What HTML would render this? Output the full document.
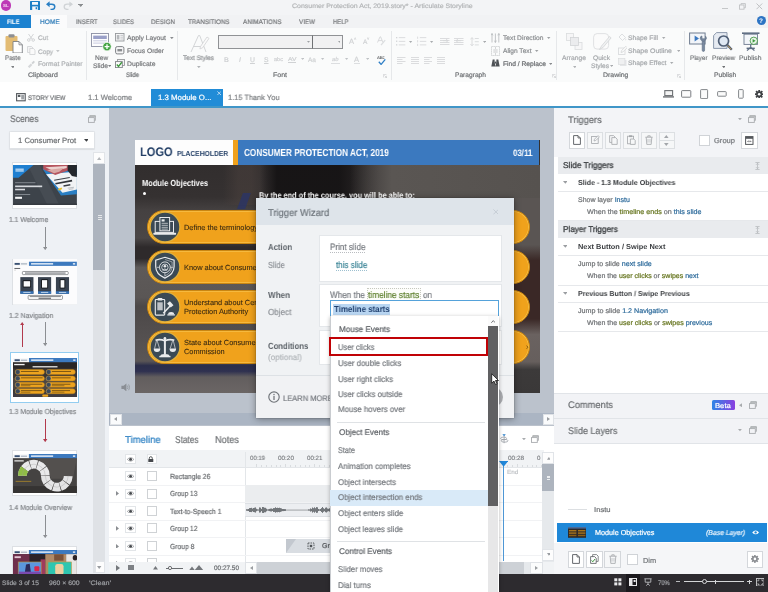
<!DOCTYPE html>
<html><head><meta charset="utf-8"><title>Consumer Protection Act, 2019.story - Articulate Storyline</title>
<style>
html,body{margin:0;padding:0;}
body{width:768px;height:592px;overflow:hidden;position:relative;background:#fff;font-family:"Liberation Sans",Arial,sans-serif;}
.a{position:absolute;box-sizing:border-box;display:block;}
.t{text-rendering:geometricPrecision;will-change:transform;position:absolute;white-space:nowrap;transform-origin:0 50%;display:block;}
</style></head><body>
<div class="a" style="left:0px;top:0px;width:768px;height:15px;background:#f3f4f6;"></div>
<div class="a" style="left:0.5px;top:0px;width:10.5px;height:10.5px;background:#bd3bb6;border-radius:50%;"></div>
<span class="t" style="left:2.9px;top:4px;font-size:4.4px;line-height:4.4px;color:#f6d8f2;font-weight:bold;">SL</span>
<svg class="a" style="left:30px;top:1px;" width="10" height="9" viewBox="0 0 10 9"><rect x="0" y="0" width="10" height="9" rx="0.6" fill="#1d7fc6"/><rect x="2" y="1" width="6" height="2.8" fill="#f3f6fa"/><rect x="2.2" y="5.4" width="5.6" height="3.6" fill="#f3f6fa"/><rect x="5.6" y="6.2" width="1.4" height="2" fill="#1d7fc6"/></svg>
<svg class="a" style="left:46px;top:1px;" width="10" height="9" viewBox="0 0 10 9"><path d="M1.2,3.2h4.6a3,2.6 0 0 1 0,5.2h-1.3" fill="none" stroke="#2a7fc4" stroke-width="1.5"/><polygon points="0,3.2 3.6,0.2 3.6,6.2" fill="#2a7fc4"/></svg>
<svg class="a" style="left:63px;top:1px;" width="10" height="9" viewBox="0 0 10 9"><path d="M8.8,3.2h-4.6a3,2.6 0 0 0 0,5.2h1.3" fill="none" stroke="#d0d3d6" stroke-width="1.3"/><polygon points="10,3.2 6.4,0.4 6.4,6" fill="#d0d3d6"/></svg>
<div class="a" style="left:78px;top:3.6px;width:5px;height:0.9px;background:#8a8d90;"></div>
<svg class="a" style="left:78.775px;top:5.3875px;" width="3.45" height="2.025" viewBox="0 0 3.45 2.025"><polygon points="0,0 3.45,0 1.72,2.03" fill="#8a8d90"/></svg>
<span class="t" style="left:291.5px;top:4px;font-size:6.4px;line-height:6.4px;color:#b4b6b8;-webkit-text-stroke:0.2px;transform:scaleX(1.094);">Consumer Protection Act, 2019.story* - Articulate Storyline</span>
<div class="a" style="left:721.5px;top:8px;width:6px;height:0.9px;background:#c5c7c9;"></div>
<svg class="a" style="left:738.5px;top:2.5px;" width="7" height="7" viewBox="0 0 7 7"><rect x="0.5" y="2" width="4.5" height="4.2" fill="none" stroke="#c0c2c4" stroke-width="0.9"/><path d="M2,2V0.6h4.4v4.2H5" fill="none" stroke="#c0c2c4" stroke-width="0.9"/></svg>
<svg class="a" style="left:756px;top:2.5px;" width="7" height="7" viewBox="0 0 7 7"><path d="M0.5,0.5L6.2,6.2M6.2,0.5L0.5,6.2" stroke="#c0c2c4" stroke-width="1"/></svg>
<div class="a" style="left:0px;top:15px;width:768px;height:13px;background:#f1f2f4;"></div>
<div class="a" style="left:0px;top:15px;width:31px;height:13px;background:#1c82d0;"></div>
<span class="t" style="left:7px;top:20px;font-size:6.6px;line-height:6.6px;color:#ffffff;font-weight:bold;transform:scaleX(0.874);">FILE</span>
<div class="a" style="left:31px;top:15px;width:35.5px;height:13px;background:#fbfbfc;"></div>
<span class="t" style="left:39.5px;top:20px;font-size:6.6px;line-height:6.6px;color:#2f7cb8;-webkit-text-stroke:0.2px;transform:scaleX(0.985);">HOME</span>
<span class="t" style="left:75.5px;top:20px;font-size:6.6px;line-height:6.6px;color:#77797c;-webkit-text-stroke:0.2px;transform:scaleX(0.893);">INSERT</span>
<span class="t" style="left:112.5px;top:20px;font-size:6.6px;line-height:6.6px;color:#77797c;-webkit-text-stroke:0.2px;transform:scaleX(0.894);">SLIDES</span>
<span class="t" style="left:150.5px;top:20px;font-size:6.6px;line-height:6.6px;color:#77797c;-webkit-text-stroke:0.2px;transform:scaleX(0.948);">DESIGN</span>
<span class="t" style="left:188px;top:20px;font-size:6.6px;line-height:6.6px;color:#77797c;-webkit-text-stroke:0.2px;transform:scaleX(0.935);">TRANSITIONS</span>
<span class="t" style="left:243px;top:20px;font-size:6.6px;line-height:6.6px;color:#77797c;-webkit-text-stroke:0.2px;transform:scaleX(0.949);">ANIMATIONS</span>
<span class="t" style="left:298.5px;top:20px;font-size:6.6px;line-height:6.6px;color:#77797c;-webkit-text-stroke:0.2px;transform:scaleX(0.949);">VIEW</span>
<span class="t" style="left:333px;top:20px;font-size:6.6px;line-height:6.6px;color:#77797c;-webkit-text-stroke:0.2px;transform:scaleX(0.899);">HELP</span>
<div class="a" style="left:756.5px;top:16px;width:9px;height:9px;background:#2d74c4;border-radius:50%;"></div>
<span class="t" style="left:759.3px;top:19px;font-size:6.5px;line-height:6.5px;color:#ffffff;font-weight:bold;">?</span>
<div class="a" style="left:0px;top:28px;width:768px;height:54px;background:#fafbfb;"></div>
<div class="a" style="left:0px;top:81.5px;width:768px;height:0.8px;background:#e4e6e8;"></div>
<div class="a" style="left:86px;top:31px;width:0.8px;height:49px;background:#e6e8ea;"></div>
<div class="a" style="left:176.5px;top:31px;width:0.8px;height:49px;background:#e6e8ea;"></div>
<div class="a" style="left:390.5px;top:31px;width:0.8px;height:49px;background:#e6e8ea;"></div>
<div class="a" style="left:556px;top:31px;width:0.8px;height:49px;background:#e6e8ea;"></div>
<div class="a" style="left:683.5px;top:31px;width:0.8px;height:49px;background:#e6e8ea;"></div>
<svg class="a" style="left:5px;top:33.5px;" width="18" height="19.5" viewBox="0 0 18 19.5"><rect x="0.5" y="2" width="12" height="15" rx="1" fill="#e3bc74"/><rect x="3.5" y="0.3" width="6" height="3.2" rx="1" fill="#8d8f92"/><path d="M8,7.5h6l3.3,3.3v8.2H8z" fill="#fff" stroke="#7d8084" stroke-width="0.9"/><path d="M14,7.5v3.3h3.3" fill="none" stroke="#7d8084" stroke-width="0.8"/></svg>
<span class="t" style="left:4.5px;top:56px;font-size:6.6px;line-height:6.6px;color:#77797c;-webkit-text-stroke:0.2px;transform:scaleX(0.918);">Paste</span>
<svg class="a" style="left:10.545px;top:65.6525px;" width="3.91" height="2.295" viewBox="0 0 3.91 2.295"><polygon points="0,0 3.91,0 1.95,2.29" fill="#7d8084"/></svg>
<svg class="a" style="left:27px;top:34px;" width="8" height="7.5" viewBox="0 0 8 7.5"><path d="M1.5,0L5.2,5.2M6.5,0L2.8,5.2" stroke="#c9ccce" stroke-width="0.8" fill="none"/><circle cx="1.8" cy="6" r="1.3" fill="none" stroke="#c9ccce" stroke-width="0.8"/><circle cx="6.2" cy="6" r="1.3" fill="none" stroke="#c9ccce" stroke-width="0.8"/></svg>
<span class="t" style="left:37.5px;top:36px;font-size:6.6px;line-height:6.6px;color:#adb0b3;-webkit-text-stroke:0.2px;transform:scaleX(0.974);">Cut</span>
<svg class="a" style="left:27px;top:46px;" width="8.5" height="9" viewBox="0 0 8.5 9"><path d="M0.5,0.5h4l1.5,1.5v4.5h-5.5z" fill="#f4f4f5" stroke="#cfd2d4" stroke-width="0.8"/><path d="M2.8,2.5h3.6l1.6,1.6v4.4h-5.2z" fill="#fafafa" stroke="#cfd2d4" stroke-width="0.8"/></svg>
<span class="t" style="left:37.5px;top:50px;font-size:6.6px;line-height:6.6px;color:#adb0b3;-webkit-text-stroke:0.2px;transform:scaleX(0.974);">Copy</span>
<svg class="a" style="left:56.16px;top:50.42px;" width="3.68" height="2.16" viewBox="0 0 3.68 2.16"><polygon points="0,0 3.68,0 1.84,2.16" fill="#c3c6c8"/></svg>
<svg class="a" style="left:27px;top:59.5px;" width="8.5" height="8.5" viewBox="0 0 8.5 8.5"><path d="M0.8,6.5l3-3 1.6,1.6-3,3z" fill="#d6d8da"/><path d="M4.4,2.9l2.2-2.2 1.4,1.4-2.2,2.2z" fill="#cfd2d4"/></svg>
<span class="t" style="left:37.5px;top:62px;font-size:6.6px;line-height:6.6px;color:#adb0b3;-webkit-text-stroke:0.2px;transform:scaleX(1.020);">Format Painter</span>
<span class="t" style="left:28px;top:73px;font-size:6.6px;line-height:6.6px;color:#6e7174;-webkit-text-stroke:0.2px;transform:scaleX(1.062);">Clipboard</span>
<svg class="a" style="left:91px;top:32.5px;" width="21" height="18.5" viewBox="0 0 21 18.5"><rect x="0.5" y="0.5" width="17" height="13" fill="#fdfdfe" stroke="#8b8fa3" stroke-width="0.9"/><rect x="2.2" y="2.6" width="13.6" height="3.4" fill="#9aa0c8"/><rect x="2.2" y="7.3" width="13.6" height="1" fill="#c8cbe0"/><rect x="2.2" y="9.6" width="13.6" height="1" fill="#c8cbe0"/><circle cx="16" cy="13.6" r="4.3" fill="#46a546" stroke="#fff" stroke-width="0.8"/><path d="M16,11.2v4.8M13.6,13.6h4.8" stroke="#fff" stroke-width="1.3"/></svg>
<span class="t" style="left:95px;top:56px;font-size:6.6px;line-height:6.6px;color:#77797c;-webkit-text-stroke:0.2px;transform:scaleX(0.985);">New</span>
<span class="t" style="left:92.5px;top:64px;font-size:6.6px;line-height:6.6px;color:#77797c;-webkit-text-stroke:0.2px;transform:scaleX(1.022);">Slide</span>
<svg class="a" style="left:107.775px;top:65.2875px;" width="3.45" height="2.025" viewBox="0 0 3.45 2.025"><polygon points="0,0 3.45,0 1.72,2.03" fill="#7d8084"/></svg>
<svg class="a" style="left:115px;top:33px;" width="9.5" height="8.5" viewBox="0 0 9.5 8.5"><rect x="0.5" y="0.5" width="8.5" height="7.5" fill="#f6f6f7" stroke="#96999c" stroke-width="0.9"/><rect x="1.8" y="2" width="2.6" height="4.5" fill="#b5b8bb"/><path d="M5.4,2.4h2.6M5.4,4.2h2.6M5.4,6h2.6" stroke="#b5b8bb" stroke-width="0.7"/></svg>
<span class="t" style="left:127px;top:36px;font-size:6.6px;line-height:6.6px;color:#77797c;-webkit-text-stroke:0.2px;transform:scaleX(1.022);">Apply Layout</span>
<svg class="a" style="left:170.16px;top:36.92px;" width="3.68" height="2.16" viewBox="0 0 3.68 2.16"><polygon points="0,0 3.68,0 1.84,2.16" fill="#8a8d90"/></svg>
<svg class="a" style="left:115px;top:46px;" width="9.5" height="8.5" viewBox="0 0 9.5 8.5"><rect x="0.6" y="0.6" width="8.3" height="7.3" rx="1.6" fill="#f6f6f7" stroke="#7f8286" stroke-width="1"/><rect x="2.4" y="3" width="4.7" height="2.4" fill="#8a8d90"/></svg>
<span class="t" style="left:127px;top:49px;font-size:6.6px;line-height:6.6px;color:#77797c;-webkit-text-stroke:0.2px;transform:scaleX(1.009);">Focus Order</span>
<svg class="a" style="left:115px;top:59px;" width="10" height="9" viewBox="0 0 10 9"><rect x="2.6" y="0.5" width="6.8" height="6" fill="#f4f4f5" stroke="#8a8d90" stroke-width="0.8"/><rect x="0.5" y="2.6" width="6.8" height="6" fill="#fdfdfd" stroke="#7f8286" stroke-width="0.9"/><path d="M1.8,5.6l1.7,1.8 3.3-4.2" stroke="#3f9a3f" stroke-width="1.4" fill="none"/></svg>
<span class="t" style="left:127px;top:62px;font-size:6.6px;line-height:6.6px;color:#77797c;-webkit-text-stroke:0.2px;transform:scaleX(1.036);">Duplicate</span>
<span class="t" style="left:126px;top:73px;font-size:6.6px;line-height:6.6px;color:#6e7174;-webkit-text-stroke:0.2px;transform:scaleX(0.886);">Slide</span>
<svg class="a" style="left:189px;top:33.5px;" width="21" height="19.5" viewBox="0 0 21 19.5"><path d="M2,18L9.5,1.5h1.2L17,18M5,12.5h9.5" stroke="#d3d5d7" stroke-width="1" fill="none"/><path d="M11.5,12.5l6.5-9.5 2,1.4-6.5,9.5-2.6,1z" fill="#fafafa" stroke="#d0d2d4" stroke-width="0.8"/></svg>
<span class="t" style="left:183px;top:56px;font-size:6.6px;line-height:6.6px;color:#8f9295;-webkit-text-stroke:0.2px;transform:scaleX(0.971);">Text Styles</span>
<svg class="a" style="left:197.16px;top:65.72px;" width="3.68" height="2.16" viewBox="0 0 3.68 2.16"><polygon points="0,0 3.68,0 1.84,2.16" fill="#b0b3b6"/></svg>
<div class="a" style="left:218px;top:34.5px;width:94.5px;height:14px;background:#f1f1f2;border:1px solid #909295;"></div>
<div class="a" style="left:311.5px;top:34.5px;width:31.5px;height:14px;background:#f1f1f2;border:1px solid #909295;border-left:1.6px solid #6f7174;"></div>
<svg class="a" style="left:307.205px;top:40.8225px;" width="2.99" height="1.755" viewBox="0 0 2.99 1.755"><polygon points="0,0 2.99,0 1.49,1.76" fill="#9da0a3"/></svg>
<svg class="a" style="left:337.505px;top:40.8225px;" width="2.99" height="1.755" viewBox="0 0 2.99 1.755"><polygon points="0,0 2.99,0 1.49,1.76" fill="#9da0a3"/></svg>
<span class="t" style="left:348.5px;top:38px;font-size:7.5px;line-height:7.5px;color:#d0d2d4;-webkit-text-stroke:0.2px;">A</span>
<span class="t" style="left:362.5px;top:40px;font-size:6.5px;line-height:6.5px;color:#d0d2d4;-webkit-text-stroke:0.2px;">A</span>
<span class="t" style="left:354px;top:37px;font-size:4px;line-height:4px;color:#d0d2d4;-webkit-text-stroke:0.2px;">˄</span>
<span class="t" style="left:367px;top:37px;font-size:4px;line-height:4px;color:#d0d2d4;-webkit-text-stroke:0.2px;">˅</span>
<svg class="a" style="left:377px;top:36px;" width="9" height="9.5" viewBox="0 0 9 9.5"><path d="M0.5,6.5L3,0.8h0.6L6,6.5M1.4,4.6h3.6" stroke="#d0d2d4" stroke-width="0.8" fill="none"/><path d="M3.5,8.8l4.2-5 1,0.8-4.2,5z" fill="#dcdee0"/></svg>
<span class="t" style="left:223.5px;top:58px;font-size:6.8px;line-height:6.8px;color:#d0d2d4;font-weight:bold;">B</span>
<span class="t" style="left:238.5px;top:58px;font-size:6.8px;line-height:6.8px;color:#d0d2d4;-webkit-text-stroke:0.2px;font-style:italic;">I</span>
<span class="t" style="left:250px;top:58px;font-size:6.8px;line-height:6.8px;color:#d0d2d4;-webkit-text-stroke:0.2px;text-decoration:underline;">U</span>
<span class="t" style="left:263.5px;top:58px;font-size:6.8px;line-height:6.8px;color:#d0d2d4;-webkit-text-stroke:0.2px;text-decoration:underline;">S</span>
<span class="t" style="left:274px;top:58px;font-size:5.4px;line-height:5.4px;color:#d0d2d4;-webkit-text-stroke:0.2px;transform:scaleX(1.034);">abc</span>
<span class="t" style="left:287.5px;top:58px;font-size:5.6px;line-height:5.6px;color:#d0d2d4;-webkit-text-stroke:0.2px;transform:scaleX(1.205);">AV</span>
<div class="a" style="left:288px;top:62.4px;width:7.5px;height:0.7px;background:#d0d2d4;"></div>
<svg class="a" style="left:300.89px;top:58.355px;" width="3.22" height="1.89" viewBox="0 0 3.22 1.89"><polygon points="0,0 3.22,0 1.61,1.89" fill="#c0c3c6"/></svg>
<span class="t" style="left:308px;top:58px;font-size:6.4px;line-height:6.4px;color:#d0d2d4;-webkit-text-stroke:0.2px;transform:scaleX(1.022);">Aa</span>
<svg class="a" style="left:321.39px;top:58.355px;" width="3.22" height="1.89" viewBox="0 0 3.22 1.89"><polygon points="0,0 3.22,0 1.61,1.89" fill="#c0c3c6"/></svg>
<span class="t" style="left:331.5px;top:58px;font-size:5.6px;line-height:5.6px;color:#d0d2d4;-webkit-text-stroke:0.2px;font-style:italic;transform:scaleX(1.044);">ab</span>
<div class="a" style="left:331px;top:62.6px;width:9px;height:1px;background:#dcdee0;"></div>
<svg class="a" style="left:345.39px;top:58.355px;" width="3.22" height="1.89" viewBox="0 0 3.22 1.89"><polygon points="0,0 3.22,0 1.61,1.89" fill="#c0c3c6"/></svg>
<span class="t" style="left:354.2px;top:56px;font-size:7.6px;line-height:7.6px;color:#d0d2d4;-webkit-text-stroke:0.2px;">A</span>
<div class="a" style="left:354px;top:62.6px;width:6px;height:1px;background:#dcdee0;"></div>
<svg class="a" style="left:365.99px;top:58.355px;" width="3.22" height="1.89" viewBox="0 0 3.22 1.89"><polygon points="0,0 3.22,0 1.61,1.89" fill="#c0c3c6"/></svg>
<span class="t" style="left:377.2px;top:56px;font-size:3.9px;line-height:3.9px;color:#55585c;font-weight:bold;transform:scaleX(0.923);">ABC</span>
<svg class="a" style="left:377.5px;top:58.5px;" width="8" height="6.5" viewBox="0 0 8 6.5"><path d="M0.8,2.8l2.3,2.6 4.2-5" stroke="#2f7fc6" stroke-width="1.3" fill="none"/></svg>
<span class="t" style="left:273px;top:73px;font-size:6.6px;line-height:6.6px;color:#6e7174;-webkit-text-stroke:0.2px;transform:scaleX(1.060);">Font</span>
<svg class="a" style="left:383px;top:73.5px;" width="4" height="4" viewBox="0 0 4 4"><path d="M0.4,0.4h3M0.4,0.4v3M1.4,1.4l2.2,2.2M3.6,1.8v1.8h-1.8" stroke="#c2c5c8" stroke-width="0.6" fill="none"/></svg>
<svg class="a" style="left:396px;top:36px;" width="9.5" height="10" viewBox="0 0 9.5 10"><rect x="0" y="1.0" width="1.3" height="1.3" fill="#d3d5d7"/><rect x="2.8" y="1.3" width="6.5" height="0.8" fill="#d3d5d7"/><rect x="0" y="4.6" width="1.3" height="1.3" fill="#d3d5d7"/><rect x="2.8" y="4.9" width="6.5" height="0.8" fill="#d3d5d7"/><rect x="0" y="8.2" width="1.3" height="1.3" fill="#d3d5d7"/><rect x="2.8" y="8.5" width="6.5" height="0.8" fill="#d3d5d7"/></svg>
<svg class="a" style="left:409.39px;top:40.755px;" width="3.22" height="1.89" viewBox="0 0 3.22 1.89"><polygon points="0,0 3.22,0 1.61,1.89" fill="#a9acaf"/></svg>
<svg class="a" style="left:417px;top:36px;" width="9.5" height="10" viewBox="0 0 9.5 10"><rect x="0.3" y="0.6" width="0.8" height="2.2" fill="#d3d5d7"/><rect x="2.8" y="1.3" width="6.5" height="0.8" fill="#d3d5d7"/><rect x="0.3" y="4.2" width="0.8" height="2.2" fill="#d3d5d7"/><rect x="2.8" y="4.9" width="6.5" height="0.8" fill="#d3d5d7"/><rect x="0.3" y="7.8" width="0.8" height="2.2" fill="#d3d5d7"/><rect x="2.8" y="8.5" width="6.5" height="0.8" fill="#d3d5d7"/></svg>
<svg class="a" style="left:430.39px;top:40.755px;" width="3.22" height="1.89" viewBox="0 0 3.22 1.89"><polygon points="0,0 3.22,0 1.61,1.89" fill="#a9acaf"/></svg>
<svg class="a" style="left:440px;top:37.5px;" width="9.5" height="7" viewBox="0 0 9.5 7"><rect x="0" y="0.10" width="9.5" height="0.8" fill="#d3d5d7"/><rect x="0" y="2.10" width="9.5" height="0.8" fill="#d3d5d7"/><rect x="0" y="4.10" width="9.5" height="0.8" fill="#d3d5d7"/><rect x="0" y="6.10" width="9.5" height="0.8" fill="#d3d5d7"/></svg>
<svg class="a" style="left:443px;top:39.3px;" width="6" height="3.5" viewBox="0 0 6 3.5"><path d="M0,1.7h4.5M3,0l2,1.7-2,1.7" stroke="#d3d5d7" stroke-width="0.8" fill="none"/></svg>
<svg class="a" style="left:454px;top:37.5px;" width="9.5" height="7" viewBox="0 0 9.5 7"><rect x="0" y="0.10" width="9.5" height="0.8" fill="#d3d5d7"/><rect x="0" y="2.10" width="9.5" height="0.8" fill="#d3d5d7"/><rect x="0" y="4.10" width="9.5" height="0.8" fill="#d3d5d7"/><rect x="0" y="6.10" width="9.5" height="0.8" fill="#d3d5d7"/></svg>
<svg class="a" style="left:455px;top:39.3px;" width="6" height="3.5" viewBox="0 0 6 3.5"><path d="M6,1.7h-4.5M3,0l-2,1.7 2,1.7" stroke="#d3d5d7" stroke-width="0.8" fill="none"/></svg>
<svg class="a" style="left:470px;top:36.5px;" width="9" height="9.5" viewBox="0 0 9 9.5"><path d="M2,0.8v7.8M0.4,2.4l1.6-1.8 1.6,1.8M0.4,7l1.6,1.8 1.6-1.8" stroke="#d3d5d7" stroke-width="0.8" fill="none"/><path d="M4.8,1.5h4M4.8,4.7h4M4.8,7.9h4" stroke="#d3d5d7" stroke-width="0.8"/></svg>
<svg class="a" style="left:482.89px;top:40.755px;" width="3.22" height="1.89" viewBox="0 0 3.22 1.89"><polygon points="0,0 3.22,0 1.61,1.89" fill="#a9acaf"/></svg>
<svg class="a" style="left:397px;top:56.5px;" width="8.5" height="7" viewBox="0 0 8.5 7"><rect x="0" y="0.10" width="8.5" height="0.8" fill="#d3d5d7"/><rect x="0" y="2.10" width="5.525" height="0.8" fill="#d3d5d7"/><rect x="0" y="4.10" width="8.5" height="0.8" fill="#d3d5d7"/><rect x="0" y="6.10" width="5.525" height="0.8" fill="#d3d5d7"/></svg>
<svg class="a" style="left:410.5px;top:56.5px;" width="8.5" height="7" viewBox="0 0 8.5 7"><rect x="0" y="0.10" width="8.5" height="0.8" fill="#d3d5d7"/><rect x="0" y="2.10" width="8.5" height="0.8" fill="#d3d5d7"/><rect x="0" y="4.10" width="8.5" height="0.8" fill="#d3d5d7"/><rect x="0" y="6.10" width="8.5" height="0.8" fill="#d3d5d7"/></svg>
<svg class="a" style="left:423.5px;top:56.5px;" width="8.5" height="7" viewBox="0 0 8.5 7"><rect x="0" y="0.10" width="8.5" height="0.8" fill="#d3d5d7"/><rect x="0" y="2.10" width="5.525" height="0.8" fill="#d3d5d7"/><rect x="0" y="4.10" width="8.5" height="0.8" fill="#d3d5d7"/><rect x="0" y="6.10" width="5.525" height="0.8" fill="#d3d5d7"/></svg>
<svg class="a" style="left:436.5px;top:56.5px;" width="8.5" height="7" viewBox="0 0 8.5 7"><rect x="0" y="0.10" width="8.5" height="0.8" fill="#d3d5d7"/><rect x="0" y="2.10" width="8.5" height="0.8" fill="#d3d5d7"/><rect x="0" y="4.10" width="8.5" height="0.8" fill="#d3d5d7"/><rect x="0" y="6.10" width="8.5" height="0.8" fill="#d3d5d7"/></svg>
<svg class="a" style="left:491px;top:32.5px;" width="9" height="10" viewBox="0 0 9 10"><path d="M1,0.5v9M4.4,0.5v9M7.8,0.5v9" stroke="#b4b7ba" stroke-width="0.8"/><path d="M0,2.4l1-1.9 1,1.9M3.4,7.6l1,1.9 1-1.9M6.8,2.4l1-1.9 1,1.9" stroke="#b4b7ba" stroke-width="0.7" fill="none"/></svg>
<span class="t" style="left:502.5px;top:36px;font-size:6.6px;line-height:6.6px;color:#8a8d90;-webkit-text-stroke:0.2px;transform:scaleX(1.013);">Text Direction</span>
<svg class="a" style="left:547.275px;top:36.9875px;" width="3.45" height="2.025" viewBox="0 0 3.45 2.025"><polygon points="0,0 3.45,0 1.72,2.03" fill="#9da0a3"/></svg>
<svg class="a" style="left:491px;top:45.5px;" width="9" height="10" viewBox="0 0 9 10"><rect x="0.5" y="0.5" width="8" height="9" fill="none" stroke="#b4b7ba" stroke-width="0.7" stroke-dasharray="1.2,0.8"/><path d="M2.3,4h4.4M2.3,6h4.4M4.5,1.2v1.6M4.5,7.2v1.6" stroke="#b4b7ba" stroke-width="0.7"/></svg>
<span class="t" style="left:502.5px;top:49px;font-size:6.6px;line-height:6.6px;color:#8a8d90;-webkit-text-stroke:0.2px;transform:scaleX(1.000);">Align Text</span>
<svg class="a" style="left:535.275px;top:50.4875px;" width="3.45" height="2.025" viewBox="0 0 3.45 2.025"><polygon points="0,0 3.45,0 1.72,2.03" fill="#9da0a3"/></svg>
<svg class="a" style="left:491px;top:59.3px;" width="9" height="8.5" viewBox="0 0 9 8.5"><path d="M1.7,0.5h1.9v2.5l0.9,4.5h-4.2l0.9-4.5zM5.4,0.5h1.9l0.5,2.5 0.9,4.5h-4.2l0.9-4.5z" fill="#4e5256"/><rect x="3.6" y="2.6" width="1.8" height="2" fill="#4e5256"/></svg>
<span class="t" style="left:502.5px;top:62px;font-size:6.6px;line-height:6.6px;color:#66696c;-webkit-text-stroke:0.2px;transform:scaleX(1.010);">Find / Replace</span>
<svg class="a" style="left:548.775px;top:63.4875px;" width="3.45" height="2.025" viewBox="0 0 3.45 2.025"><polygon points="0,0 3.45,0 1.72,2.03" fill="#8a8d90"/></svg>
<span class="t" style="left:454.5px;top:73px;font-size:6.6px;line-height:6.6px;color:#6e7174;-webkit-text-stroke:0.2px;transform:scaleX(1.006);">Paragraph</span>
<svg class="a" style="left:551.5px;top:73.5px;" width="4" height="4" viewBox="0 0 4 4"><path d="M0.4,0.4h3M0.4,0.4v3M1.4,1.4l2.2,2.2M3.6,1.8v1.8h-1.8" stroke="#c2c5c8" stroke-width="0.6" fill="none"/></svg>
<svg class="a" style="left:565.5px;top:33px;" width="17" height="17.5" viewBox="0 0 17 17.5"><rect x="0.5" y="0.5" width="7" height="7" fill="#f6f6f7" stroke="#dadcde" stroke-width="0.8"/><rect x="9" y="9.5" width="7" height="7" fill="#f6f6f7" stroke="#dadcde" stroke-width="0.8"/><rect x="4.5" y="4.5" width="8" height="8" fill="#ebecee" stroke="#d2d4d6" stroke-width="0.8"/></svg>
<span class="t" style="left:562.4px;top:56px;font-size:6.6px;line-height:6.6px;color:#a6a9ac;-webkit-text-stroke:0.2px;transform:scaleX(1.018);">Arrange</span>
<svg class="a" style="left:572.66px;top:65.72px;" width="3.68" height="2.16" viewBox="0 0 3.68 2.16"><polygon points="0,0 3.68,0 1.84,2.16" fill="#b0b3b6"/></svg>
<svg class="a" style="left:593px;top:33px;" width="19" height="19.5" viewBox="0 0 19 19.5"><rect x="0.6" y="0.6" width="15" height="15.5" rx="3.5" fill="#fbfbfb" stroke="#dcdee0" stroke-width="0.9"/><path d="M6.5,16.5l2-3.5 8-9.5 1.6,1.4-8,9.5z" fill="#f0f1f2" stroke="#cfd1d3" stroke-width="0.7"/></svg>
<span class="t" style="left:593px;top:56px;font-size:6.6px;line-height:6.6px;color:#a6a9ac;-webkit-text-stroke:0.2px;transform:scaleX(1.008);">Quick</span>
<span class="t" style="left:591px;top:64px;font-size:6.6px;line-height:6.6px;color:#a6a9ac;-webkit-text-stroke:0.2px;transform:scaleX(1.002);">Styles</span>
<svg class="a" style="left:609.69px;top:65.455px;" width="3.22" height="1.89" viewBox="0 0 3.22 1.89"><polygon points="0,0 3.22,0 1.61,1.89" fill="#a9acaf"/></svg>
<svg class="a" style="left:617.5px;top:33px;" width="9" height="8.5" viewBox="0 0 9 8.5"><path d="M1,4l3-3 3.5,3.5-3,3z" fill="none" stroke="#d6d8da" stroke-width="0.8"/><path d="M7.8,5.2q1,1.6 0,2.4q-1-0.8 0-2.4" fill="#d6d8da"/></svg>
<span class="t" style="left:628px;top:36px;font-size:6.6px;line-height:6.6px;color:#a6a9ac;-webkit-text-stroke:0.2px;transform:scaleX(1.022);">Shape Fill</span>
<svg class="a" style="left:662.275px;top:37.3875px;" width="3.45" height="2.025" viewBox="0 0 3.45 2.025"><polygon points="0,0 3.45,0 1.72,2.03" fill="#a9acaf"/></svg>
<svg class="a" style="left:617.5px;top:45.5px;" width="9.5" height="9" viewBox="0 0 9.5 9"><rect x="0.5" y="2" width="6.5" height="6.5" fill="none" stroke="#d6d8da" stroke-width="0.8"/><path d="M3,6.5l0.6-2 4.2-4.2 1.4,1.4-4.2,4.2z" fill="#fafafa" stroke="#d0d2d4" stroke-width="0.7"/></svg>
<span class="t" style="left:628px;top:49px;font-size:6.6px;line-height:6.6px;color:#a6a9ac;-webkit-text-stroke:0.2px;transform:scaleX(1.052);">Shape Outline</span>
<svg class="a" style="left:676.875px;top:49.9875px;" width="3.45" height="2.025" viewBox="0 0 3.45 2.025"><polygon points="0,0 3.45,0 1.72,2.03" fill="#a9acaf"/></svg>
<svg class="a" style="left:617.5px;top:58px;" width="9" height="8.5" viewBox="0 0 9 8.5"><rect x="2" y="2" width="6.5" height="6" fill="#e4e6e8"/><rect x="0.4" y="0.4" width="6.5" height="6" fill="#eff0f1" stroke="#dadcde" stroke-width="0.7"/></svg>
<span class="t" style="left:628px;top:61px;font-size:6.6px;line-height:6.6px;color:#a6a9ac;-webkit-text-stroke:0.2px;transform:scaleX(1.022);">Shape Effect</span>
<svg class="a" style="left:670.275px;top:62.1875px;" width="3.45" height="2.025" viewBox="0 0 3.45 2.025"><polygon points="0,0 3.45,0 1.72,2.03" fill="#a9acaf"/></svg>
<span class="t" style="left:603px;top:73px;font-size:6.6px;line-height:6.6px;color:#6e7174;-webkit-text-stroke:0.2px;transform:scaleX(1.053);">Drawing</span>
<svg class="a" style="left:677px;top:73.5px;" width="4" height="4" viewBox="0 0 4 4"><path d="M0.4,0.4h3M0.4,0.4v3M1.4,1.4l2.2,2.2M3.6,1.8v1.8h-1.8" stroke="#c2c5c8" stroke-width="0.6" fill="none"/></svg>
<svg class="a" style="left:689px;top:32px;" width="19" height="20" viewBox="0 0 19 20"><rect x="0.6" y="1" width="15.5" height="11" fill="#f2f5f9" stroke="#6f7c90" stroke-width="1"/><polygon points="5.6,3.6 5.6,9.4 10,6.5" fill="#3b78c0"/><path d="M12,4.2a3,3 0 1 0 4.6,0v2.6h-1v0h-2.6v-2.6zM13.2,9v9.2a1.2,1.2 0 0 0 2.4,0V9" fill="#7a8aa0" stroke="#5d6c82" stroke-width="0.6"/></svg>
<span class="t" style="left:690px;top:56px;font-size:6.6px;line-height:6.6px;color:#66696c;transform:scaleX(0.935);-webkit-text-stroke:0.1px;">Player</span>
<svg class="a" style="left:713px;top:32px;" width="20" height="20" viewBox="0 0 20 20"><path d="M0.6,3.5L3.6,0.6H14v15.8H0.6z" fill="#e6ebf2" stroke="#7f8da3" stroke-width="0.9"/><circle cx="10.6" cy="9" r="5" fill="#dfe8f3" stroke="#4f5e75" stroke-width="1.7"/><path d="M14.2,12.8l4.6,5" stroke="#4f5e75" stroke-width="2.3"/><path d="M14.6,13.4l3.8,4" stroke="#c89a4a" stroke-width="0.9"/></svg>
<span class="t" style="left:712px;top:56px;font-size:6.6px;line-height:6.6px;color:#66696c;transform:scaleX(0.980);-webkit-text-stroke:0.1px;">Preview</span>
<svg class="a" style="left:721.76px;top:65.72px;" width="3.68" height="2.16" viewBox="0 0 3.68 2.16"><polygon points="0,0 3.68,0 1.84,2.16" fill="#6e7174"/></svg>
<svg class="a" style="left:742px;top:32px;" width="18" height="20" viewBox="0 0 18 20"><path d="M0,1.2h17.5" stroke="#5d6c82" stroke-width="1.6"/><rect x="2" y="2.2" width="13.5" height="10.2" fill="#f3f6fa" stroke="#6f7c90" stroke-width="0.9"/><circle cx="11.8" cy="8.8" r="3.7" fill="#e8f4e8" stroke="#4a9a4a" stroke-width="0.9"/><polygon points="10.6,6.9 10.6,10.7 13.6,8.8" fill="#3f9a3f"/><path d="M8.7,12.5v3M5,18.6l3.7-3.2 3.7,3.2" stroke="#5d6c82" stroke-width="1.2" fill="none"/><rect x="4.6" y="15.6" width="8.2" height="1.5" fill="#5d6c82"/></svg>
<span class="t" style="left:739px;top:56px;font-size:6.6px;line-height:6.6px;color:#66696c;transform:scaleX(1.039);-webkit-text-stroke:0.1px;">Publish</span>
<span class="t" style="left:713.7px;top:73px;font-size:6.6px;line-height:6.6px;color:#6e7174;-webkit-text-stroke:0.2px;transform:scaleX(1.030);">Publish</span>
<div class="a" style="left:0px;top:82.3px;width:768px;height:24.5px;background:#ffffff;"></div>
<svg class="a" style="left:15.5px;top:93px;" width="10" height="8.5" viewBox="0 0 10 8.5"><rect x="0.6" y="0.6" width="8.6" height="7.2" fill="#fff" stroke="#55595e" stroke-width="1.1"/><rect x="1.8" y="1.8" width="2.6" height="2.2" fill="#55595e"/><rect x="5.2" y="1.8" width="2.8" height="4.6" fill="#9ea2a6"/></svg>
<span class="t" style="left:28px;top:96px;font-size:6.5px;line-height:6.5px;color:#6a6d70;-webkit-text-stroke:0.2px;transform:scaleX(0.927);">STORY VIEW</span>
<span class="t" style="left:88px;top:94px;font-size:7.6px;line-height:7.6px;color:#7c7f82;-webkit-text-stroke:0.2px;transform:scaleX(0.995);">1.1 Welcome</span>
<div class="a" style="left:151px;top:88.5px;width:72px;height:18.5px;background:#218cd7;"></div>
<span class="t" style="left:157.5px;top:94px;font-size:7.6px;line-height:7.6px;color:#ffffff;-webkit-text-stroke:0.2px;transform:scaleX(1.030);">1.3 Module O...</span>
<svg class="a" style="left:216.5px;top:90.5px;" width="4.5" height="4.5" viewBox="0 0 4.5 4.5"><path d="M0.4,0.4L4,4M4,0.4L0.4,4" stroke="#d6e9f8" stroke-width="0.8"/></svg>
<span class="t" style="left:227.5px;top:94px;font-size:7.6px;line-height:7.6px;color:#7c7f82;-webkit-text-stroke:0.2px;transform:scaleX(0.977);">1.15 Thank You</span>
<div class="a" style="left:0px;top:106.2px;width:768px;height:1.5px;background:#4096c8;"></div>
<svg class="a" style="left:662.5px;top:89.5px;" width="11.5" height="8" viewBox="0 0 11.5 8"><rect x="1.8" y="0.6" width="7.8" height="5" fill="#f4f4f4" stroke="#6e7174" stroke-width="1.1"/><rect x="0" y="6.2" width="11.5" height="1.4" fill="#6e7174"/></svg>
<svg class="a" style="left:681px;top:89.8px;" width="10.5" height="8" viewBox="0 0 10.5 8"><rect x="0.6" y="0.6" width="9.2" height="6.6" rx="0.6" fill="#fbfbfb" stroke="#7b7e82" stroke-width="1"/></svg>
<svg class="a" style="left:700px;top:88.8px;" width="8.5" height="10.5" viewBox="0 0 8.5 10.5"><rect x="0.6" y="0.6" width="7" height="9" rx="0.6" fill="#fbfbfb" stroke="#85888c" stroke-width="1"/></svg>
<svg class="a" style="left:717px;top:91px;" width="10" height="6" viewBox="0 0 10 6"><rect x="0.6" y="0.6" width="8.6" height="4.6" rx="0.6" fill="#fbfbfb" stroke="#85888c" stroke-width="1"/></svg>
<svg class="a" style="left:737.5px;top:88.8px;" width="6" height="10" viewBox="0 0 6 10"><rect x="0.6" y="0.6" width="4.6" height="8.6" rx="0.6" fill="#fbfbfb" stroke="#85888c" stroke-width="1"/></svg>
<svg class="a" style="left:754.5px;top:89.8px;" width="8.4" height="8.4" viewBox="0 0 8.4 8.4"><rect x="3.3" y="-0.2" width="1.8" height="8.8" fill="#3f4245" transform="rotate(0 4.2 4.2)"/><rect x="3.3" y="-0.2" width="1.8" height="8.8" fill="#3f4245" transform="rotate(45 4.2 4.2)"/><rect x="3.3" y="-0.2" width="1.8" height="8.8" fill="#3f4245" transform="rotate(90 4.2 4.2)"/><rect x="3.3" y="-0.2" width="1.8" height="8.8" fill="#3f4245" transform="rotate(135 4.2 4.2)"/><circle cx="4.2" cy="4.2" r="3" fill="#3f4245"/><circle cx="4.2" cy="4.2" r="1.3" fill="#fff"/></svg>
<div class="a" style="left:0px;top:108px;width:109px;height:466px;background:#eef1f5;"></div>
<span class="t" style="left:9.5px;top:115px;font-size:9.6px;line-height:9.6px;color:#6c6f72;-webkit-text-stroke:0.2px;transform:scaleX(0.890);">Scenes</span>
<svg class="a" style="left:88px;top:115px;" width="8" height="8" viewBox="0 0 8 8"><rect x="0.5" y="2.6" width="5.8" height="4.8" fill="none" stroke="#a8abae" stroke-width="0.9"/><path d="M1.8,2.4V0.8h5.6v4.6H6.4" fill="none" stroke="#a8abae" stroke-width="0.9"/><rect x="1.6" y="0.5" width="6" height="1.2" fill="#a8abae"/></svg>
<div class="a" style="left:9.3px;top:131px;width:85.7px;height:18px;background:#ffffff;border:1px solid #dfe2e6;border-radius:1.5px;box-shadow:0 0.5px 1px rgba(0,0,0,0.08);"></div>
<span class="t" style="left:17.7px;top:137px;font-size:7.6px;line-height:7.6px;color:#6c6f72;-webkit-text-stroke:0.2px;transform:scaleX(1.015);">1 Consumer Prot</span>
<svg class="a" style="left:83.585px;top:138.782px;" width="4.83" height="2.835" viewBox="0 0 4.83 2.835"><polygon points="0,0 4.83,0 2.42,2.84" fill="#3c3f42"/></svg>
<div class="a" style="left:93.2px;top:152.4px;width:12.2px;height:421px;background:#dfe2e6;"></div>
<div class="a" style="left:93.2px;top:152.4px;width:12.2px;height:11.8px;background:#fdfdfd;border:0.8px solid #e1e4e8;"></div>
<svg class="a" style="left:97.3px;top:156.6px;" width="4.4" height="3" viewBox="0 0 4.4 3"><polygon points="0,3 4.4,3 2.2,0" fill="#b4b7bb"/></svg>
<div class="a" style="left:93.2px;top:164.2px;width:12.2px;height:105.8px;background:#adb4be;"></div>
<div class="a" style="left:97.5px;top:215px;width:4px;height:0.8px;background:#e6e8ea;"></div>
<div class="a" style="left:97.5px;top:216.8px;width:4px;height:0.8px;background:#e6e8ea;"></div>
<div class="a" style="left:97.5px;top:218.6px;width:4px;height:0.8px;background:#e6e8ea;"></div>
<div class="a" style="left:94.5px;top:560.5px;width:10px;height:12.5px;background:#fdfdfd;border:1px solid #e1e4e8;"></div>
<svg class="a" style="left:97.3px;top:565.5px;" width="4.4" height="3" viewBox="0 0 4.4 3"><polygon points="0,0 4.4,0 2.2,3" fill="#9a9da1"/></svg>
<div class="a" style="left:12.1px;top:162.2px;width:65.1px;height:46.8px;background:#ffffff;border:0.8px solid #dde0e4;"></div>
<svg class="a" style="left:12.8px;top:165.3px;overflow:hidden;" width="63.9" height="40.1" viewBox="75 70 613 385"><rect x="75" y="70" width="613" height="385" fill="#3d434a"/>
<polygon points="215,70 330,70 520,455 405,455" fill="#464c53"/>
<polygon points="75,70 272,70 128,192 75,192" fill="#1f7fd0"/>
<rect x="98" y="105" width="80" height="10" fill="#e8f2fb"/><rect x="98" y="121" width="80" height="12" fill="#d2e6f8"/>
<polygon points="358,106 688,96 688,350 535,364" fill="#2a7fc4"/>
<polygon points="392,160 640,138 688,172 688,306 550,336" fill="#f1f3f5"/>
<polygon points="365,70 605,70 605,122 480,166 365,112" fill="#b5545e"/>
<polygon points="385,92 590,80 590,98 470,130" fill="#ecd3d0"/>
<polygon points="400,118 560,100 520,136 470,150" fill="#d8a7a4"/>
<polygon points="600,70 688,70 688,186 640,176 600,122" fill="#24272c"/>
<path d="M470,216L620,190" stroke="#3a3e45" stroke-width="11"/><path d="M482,250L642,220" stroke="#2f3339" stroke-width="17"/><path d="M560,272L625,260" stroke="#3a3e45" stroke-width="14"/>
<path d="M600,292L660,284M610,304L655,298" stroke="#8a8e94" stroke-width="5"/>
<polygon points="505,300 540,285 548,300 515,318" fill="#e6bf32"/>
<rect x="95" y="238" width="195" height="6" fill="#a9afb6"/>
<rect x="95" y="267" width="260" height="16" fill="#d6d9dd"/><rect x="95" y="298" width="95" height="15" fill="#d6d9dd"/>
<rect x="95" y="350" width="145" height="6" fill="#a9afb6"/><rect x="95" y="375" width="66" height="20" fill="#f4f5f6"/>
<rect x="75" y="440" width="613" height="15" fill="#353a40"/></svg>
<span class="t" style="left:9.3px;top:216px;font-size:7.3px;line-height:7.3px;color:#85888c;-webkit-text-stroke:0.2px;transform:scaleX(0.925);">1.1 Welcome</span>
<div class="a" style="left:44.8px;top:226.7px;width:0.9px;height:21.8px;background:#8c8f93;"></div>
<svg class="a" style="left:43px;top:247.3px;" width="4.4" height="3.2" viewBox="0 0 4.4 3.2"><polygon points="0,0 4.4,0 2.2,3.2" fill="#8c8f93"/></svg>
<div class="a" style="left:12.3px;top:258.5px;width:65.1px;height:46.6px;background:#ffffff;border:0.8px solid #dde0e4;"></div>
<svg class="a" style="left:12.8px;top:259px;overflow:hidden;" width="64.1" height="45.6" viewBox="75 66 615 438"><rect x="75" y="66" width="615" height="438" fill="#fcfcfd"/>
<rect x="75" y="92" width="153" height="40" fill="#f7f8f9"/><rect x="228" y="92" width="460" height="40" fill="#3c79be"/><rect x="90" y="104" width="50" height="18" fill="#3a5274"/><rect x="150" y="108" width="60" height="10" fill="#9aa6b6"/><rect x="248" y="105" width="212" height="15" fill="#dbe7f5"/><rect x="650" y="105" width="22" height="15" fill="#dbe7f5"/>
<rect x="88" y="152" width="56" height="9" fill="#55595e"/><rect x="88" y="170" width="12" height="4" fill="#777"/>
<rect x="165" y="186" width="440" height="30" rx="8" fill="#fff" stroke="#3e4247" stroke-width="5"/><rect x="190" y="196" width="390" height="10" fill="#6a6e74"/>
<rect x="145" y="240" width="126" height="160" fill="#3a4350"/><rect x="145" y="376" width="126" height="24" fill="#3572b8"/><rect x="173" y="382" width="70" height="9" fill="#c9dbf0"/><rect x="168.0" y="270.0" width="80" height="70" rx="10" fill="#14161a"/><rect x="177.0" y="279.0" width="62" height="52" fill="#fbfbfc"/><rect x="315" y="240" width="126" height="160" fill="#3a4350"/><rect x="315" y="376" width="126" height="24" fill="#3572b8"/><rect x="343" y="382" width="70" height="9" fill="#c9dbf0"/><rect x="344.0" y="260.0" width="68" height="90" rx="10" fill="#14161a"/><rect x="353.0" y="269.0" width="50" height="72" fill="#fbfbfc"/><rect x="487" y="240" width="126" height="160" fill="#3a4350"/><rect x="487" y="376" width="126" height="24" fill="#3572b8"/><rect x="515" y="382" width="70" height="9" fill="#c9dbf0"/><rect x="523.0" y="260.0" width="54" height="90" rx="10" fill="#14161a"/><rect x="532.0" y="269.0" width="36" height="72" fill="#fbfbfc"/>
<rect x="220" y="416" width="330" height="38" rx="8" fill="#fff" stroke="#3e4247" stroke-width="5"/><rect x="235" y="424" width="300" height="8" fill="#6a6e74"/><rect x="320" y="438" width="120" height="9" fill="#3e4247"/></svg>
<span class="t" style="left:9.3px;top:312px;font-size:7.3px;line-height:7.3px;color:#85888c;-webkit-text-stroke:0.2px;transform:scaleX(0.951);">1.2 Navigation</span>
<div class="a" style="left:21.6px;top:324.5px;width:0.9px;height:22px;background:#b23a4c;"></div>
<svg class="a" style="left:19.8px;top:321.6px;" width="4.4" height="3.2" viewBox="0 0 4.4 3.2"><polygon points="0,3.2 4.4,3.2 2.2,0" fill="#b23a4c"/></svg>
<div class="a" style="left:44.8px;top:322px;width:0.9px;height:22.6px;background:#8c8f93;"></div>
<svg class="a" style="left:43px;top:343.4px;" width="4.4" height="3.2" viewBox="0 0 4.4 3.2"><polygon points="0,0 4.4,0 2.2,3.2" fill="#8c8f93"/></svg>
<div class="a" style="left:10.2px;top:351.8px;width:69.1px;height:51.2px;background:#ffffff;border:1.3px solid #93cdf0;"></div>
<svg class="a" style="left:12.9px;top:357.5px;overflow:hidden;" width="64.2" height="39.8" viewBox="75 110 613 380"><rect x="75" y="105" width="613" height="385" fill="#3a3634"/>
<rect x="75" y="150" width="613" height="60" fill="#2a2726"/>
<rect x="75" y="300" width="613" height="110" fill="#4b4643"/><rect x="75" y="440" width="613" height="50" fill="#3e3c42"/>
<rect x="75" y="110" width="153" height="40" fill="#f7f8f9"/><rect x="228" y="110" width="460" height="40" fill="#3c79be"/><rect x="90" y="122" width="50" height="18" fill="#3a5274"/><rect x="150" y="126" width="60" height="10" fill="#9aa6b6"/><rect x="248" y="123" width="212" height="15" fill="#dbe7f5"/><rect x="650" y="123" width="22" height="15" fill="#dbe7f5"/>
<rect x="86" y="166" width="100" height="13" fill="#f2f2f2"/><rect x="262" y="188" width="238" height="12" fill="#eeeeee"/>
<rect x="95" y="220" width="280" height="48" rx="24" fill="#eda41f" stroke="#b9801a" stroke-width="4"/><circle cx="120" cy="244" r="22" fill="#39485a" stroke="#8a949e" stroke-width="3"/><rect x="151" y="234" width="170" height="9" fill="#7a5412"/><rect x="390" y="220" width="280" height="48" rx="24" fill="#eda41f" stroke="#b9801a" stroke-width="4"/><circle cx="415" cy="244" r="22" fill="#39485a" stroke="#8a949e" stroke-width="3"/><rect x="446" y="234" width="183" height="9" fill="#7a5412"/><rect x="95" y="281" width="280" height="48" rx="24" fill="#eda41f" stroke="#b9801a" stroke-width="4"/><circle cx="120" cy="305" r="22" fill="#39485a" stroke="#8a949e" stroke-width="3"/><rect x="151" y="295" width="207" height="9" fill="#7a5412"/><rect x="390" y="281" width="280" height="48" rx="24" fill="#eda41f" stroke="#b9801a" stroke-width="4"/><circle cx="415" cy="305" r="22" fill="#39485a" stroke="#8a949e" stroke-width="3"/><rect x="446" y="295" width="180" height="9" fill="#7a5412"/><rect x="95" y="342" width="280" height="48" rx="24" fill="#eda41f" stroke="#b9801a" stroke-width="4"/><circle cx="120" cy="366" r="22" fill="#39485a" stroke="#8a949e" stroke-width="3"/><rect x="151" y="356" width="204" height="9" fill="#7a5412"/><rect x="151" y="371" width="90" height="8" fill="#8a6218"/><rect x="390" y="342" width="280" height="48" rx="24" fill="#eda41f" stroke="#b9801a" stroke-width="4"/><circle cx="415" cy="366" r="22" fill="#39485a" stroke="#8a949e" stroke-width="3"/><rect x="446" y="356" width="177" height="9" fill="#7a5412"/><rect x="446" y="371" width="120" height="8" fill="#8a6218"/><rect x="95" y="403" width="280" height="48" rx="24" fill="#eda41f" stroke="#b9801a" stroke-width="4"/><circle cx="120" cy="427" r="22" fill="#39485a" stroke="#8a949e" stroke-width="3"/><rect x="151" y="417" width="201" height="9" fill="#7a5412"/><rect x="151" y="432" width="90" height="8" fill="#8a6218"/><rect x="390" y="403" width="280" height="48" rx="24" fill="#eda41f" stroke="#b9801a" stroke-width="4"/><circle cx="415" cy="427" r="22" fill="#39485a" stroke="#8a949e" stroke-width="3"/><rect x="446" y="417" width="174" height="9" fill="#7a5412"/><rect x="446" y="432" width="120" height="8" fill="#8a6218"/>
<rect x="355" y="458" width="56" height="22" rx="6" fill="#eda41f"/></svg>
<span class="t" style="left:9.3px;top:408px;font-size:7.3px;line-height:7.3px;color:#85888c;-webkit-text-stroke:0.2px;transform:scaleX(0.932);">1.3 Module Objectives</span>
<div class="a" style="left:45.1px;top:418.8px;width:0.9px;height:21.5px;background:#b23a4c;"></div>
<svg class="a" style="left:43.3px;top:439.1px;" width="4.4" height="3.2" viewBox="0 0 4.4 3.2"><polygon points="0,0 4.4,0 2.2,3.2" fill="#b23a4c"/></svg>
<div class="a" style="left:12.3px;top:450.2px;width:65.1px;height:45.9px;background:#ffffff;border:0.8px solid #dde0e4;"></div>
<svg class="a" style="left:12.8px;top:453.6px;overflow:hidden;" width="63.9" height="39.4" viewBox="75 92 613 378"><rect x="75" y="92" width="613" height="378" fill="#454342"/>
<polygon points="290,132 688,132 650,330 440,330 400,200" fill="#53504e"/>
<rect x="75" y="400" width="613" height="70" fill="#353332"/>
<rect x="75" y="92" width="153" height="40" fill="#f7f8f9"/><rect x="228" y="92" width="460" height="40" fill="#3c79be"/><rect x="90" y="104" width="50" height="18" fill="#3a5274"/><rect x="150" y="108" width="60" height="10" fill="#9aa6b6"/><rect x="248" y="105" width="212" height="15" fill="#dbe7f5"/><rect x="650" y="105" width="22" height="15" fill="#dbe7f5"/>
<rect x="88" y="152" width="90" height="12" fill="#e8e8e8"/>
<path d="M165,300A110,110 0 0 1 385,300" fill="none" stroke="#e9e9ea" stroke-width="84" stroke-dasharray="64 5"/>
<path d="M385,300A110,110 0 0 0 605,300" fill="none" stroke="#e4e4e5" stroke-width="84" stroke-dasharray="64 5"/>
<path d="M165,300A110,110 0 0 1 186,235" fill="none" stroke="#8fbc45" stroke-width="84"/>
<path d="M165,300A110,110 0 0 1 385,300" fill="none" stroke="#9a9a9c" stroke-width="3" />
<path d="M385,300A110,110 0 0 0 605,300" fill="none" stroke="#9a9a9c" stroke-width="3"/>
<rect x="100" y="350" width="150" height="8" fill="#a8862a"/></svg>
<span class="t" style="left:9.3px;top:504px;font-size:7.3px;line-height:7.3px;color:#85888c;-webkit-text-stroke:0.2px;transform:scaleX(0.920);">1.4 Module Overview</span>
<div class="a" style="left:45.1px;top:514.5px;width:0.9px;height:21.8px;background:#8c8f93;"></div>
<svg class="a" style="left:43.3px;top:535.1px;" width="4.4" height="3.2" viewBox="0 0 4.4 3.2"><polygon points="0,0 4.4,0 2.2,3.2" fill="#8c8f93"/></svg>
<div class="a" style="left:12.3px;top:545.9px;width:65.1px;height:30px;background:#ffffff;border:0.8px solid #dde0e4;border-bottom:none;"></div>
<svg class="a" style="left:12.8px;top:549.5px;overflow:hidden;" width="63.9" height="25" viewBox="75 130 613 240"><rect x="75" y="130" width="613" height="240" fill="#2a2326"/>
<rect x="75" y="130" width="153" height="40" fill="#f7f8f9"/><rect x="228" y="130" width="460" height="40" fill="#3c79be"/><rect x="90" y="142" width="50" height="18" fill="#3a5274"/><rect x="150" y="146" width="60" height="10" fill="#9aa6b6"/><rect x="248" y="143" width="212" height="15" fill="#dbe7f5"/><rect x="650" y="143" width="22" height="15" fill="#dbe7f5"/>
<rect x="75" y="170" width="160" height="200" fill="#6e2f4c"/><rect x="90" y="190" width="60" height="18" fill="#e4c8d4"/>
<rect x="235" y="170" width="150" height="200" fill="#2b2228"/><rect x="340" y="220" width="45" height="150" fill="#a03a5c"/>
<rect x="385" y="170" width="200" height="200" fill="#b08a66"/><rect x="585" y="170" width="103" height="200" fill="#e9e6e4"/>
<ellipse cx="670" cy="205" rx="22" ry="26" fill="#2a2224"/><rect x="470" y="172" width="90" height="60" fill="#7a5238"/>
<rect x="125" y="245" width="220" height="125" fill="#5b97de" stroke="#b89a48" stroke-width="6"/>
<polygon points="185,370 200,270 235,262 250,370" fill="#2c2a5a"/><rect x="280" y="285" width="48" height="50" rx="10" fill="#d8284a"/><rect x="130" y="338" width="212" height="32" fill="#7a4ab0"/>
<rect x="410" y="245" width="225" height="125" fill="#2fc6b0" stroke="#b89a48" stroke-width="6"/>
<rect x="480" y="265" width="80" height="105" rx="22" fill="#f0cfa0"/></svg>
<div class="a" style="left:109px;top:108px;width:445.4px;height:317.5px;background:#bbc2cc;"></div>
<div class="a" style="left:135px;top:139.6px;width:404.5px;height:253.6px;background:#35312f;overflow:hidden;">
<div class="a" style="left:0;top:25.5px;width:404.5px;height:228.1px;background:linear-gradient(180deg,#322e2e 0%,#353131 14%,#454141 20%,#4a4646 32%,#2e2a2b 36%,#2e2a2b 41%,#5e5a59 45%,#5a5655 58%,#4c4848 62%,#524e4e 72%,#5a5656 86%,#2b2e4a 88%,#2f3150 90.5%,#625e5e 93%,#6b6665 100%);"></div>
<div class="a" style="left:88px;top:25.5px;width:44px;height:40px;background:linear-gradient(90deg,rgba(74,64,61,0),rgba(74,64,61,0.55) 35%,rgba(74,64,61,0.55) 65%,rgba(74,64,61,0));"></div>
<div class="a" style="left:125px;top:25.5px;width:120px;height:60px;background:linear-gradient(90deg,rgba(20,18,19,0),rgba(20,18,19,0.9) 14%,rgba(20,18,19,0.9) 66%,rgba(20,18,19,0));"></div>
<div class="a" style="left:215px;top:25.5px;width:189.5px;height:40px;background:linear-gradient(90deg,rgba(90,86,83,0),rgba(90,86,83,1) 22%,rgba(86,82,79,1));"></div>
<div class="a" style="left:105px;top:53px;width:8px;height:16px;background:#2a3566;transform:skewX(-20deg);opacity:0.8;"></div>
<div class="a" style="left:372px;top:58px;width:32.5px;height:195.6px;background:linear-gradient(180deg,#5a5553 0%,#5a5553 24%,#3a2826 32%,#3a2826 62%,#6a6260 70%,#665f5d 84%,#3c3a3a 88%,#3a3838 100%);"></div>
</div>
<div class="a" style="left:135px;top:139.6px;width:98px;height:25.6px;background:#fdfdfd;"></div>
<div class="a" style="left:233px;top:139.6px;width:4.6px;height:25.6px;background:#f0a11c;"></div>
<div class="a" style="left:237.6px;top:139.6px;width:301.9px;height:25.6px;background:#3b79bf;"></div>
<span class="t" style="left:140px;top:146px;font-size:12.4px;line-height:12.4px;color:#233f66;font-weight:bold;transform:scaleX(0.896);">LOGO</span>
<span class="t" style="left:177.2px;top:150px;font-size:7.3px;line-height:7.3px;color:#233f66;font-weight:bold;transform:scaleX(0.920);">PLACEHOLDER</span>
<span class="t" style="left:244px;top:149px;font-size:10.2px;line-height:10.2px;color:#ffffff;font-weight:bold;transform:scaleX(0.806);">CONSUMER PROTECTION ACT, 2019</span>
<span class="t" style="left:512.7px;top:149px;font-size:9.3px;line-height:9.3px;color:#ffffff;font-weight:bold;transform:scaleX(0.848);">03/11</span>
<span class="t" style="left:141.6px;top:179px;font-size:8.8px;line-height:8.8px;color:#ffffff;font-weight:bold;transform:scaleX(0.851);">Module Objectives</span>
<div class="a" style="left:142.5px;top:192px;width:3px;height:3px;background:#ffffff;border-radius:50%;"></div>
<span class="t" style="left:259.4px;top:192px;font-size:8.2px;line-height:8.2px;color:#ffffff;font-weight:bold;transform:scaleX(0.899);">By the end of the course, you will be able to:</span>
<div class="a" style="left:146.6px;top:209.6px;width:383px;height:34px;background:#f0a21c;border-radius:17px;border:1.1px solid #c98612;box-shadow:inset 0 0 0 0.8px #f7c14a;"></div>
<svg class="a" style="left:149.2px;top:210.7px;" width="32" height="32" viewBox="0 0 32 32"><circle cx="16" cy="16" r="14.9" fill="#3b4a55" stroke="#e3b23c" stroke-width="1.2"/><g transform="translate(15.9 15.9)"><rect x="-9.7" y="-5.5" width="18.3" height="11" fill="none" stroke="#e9ebed" stroke-width="1"/><rect x="-5" y="-9.4" width="9.7" height="13.3" fill="#3b4a55" stroke="#e9ebed" stroke-width="1"/><rect x="-3.3" y="-7.6" width="3" height="2.2" fill="#e9ebed"/><path d="M-3.3,-3.6h6.3M-3.3,-1.6h6.3M-3.3,0.4h6.3M-3.3,2.2h6.3" stroke="#e9ebed" stroke-width="0.7"/><rect x="-11.6" y="5.8" width="22.8" height="2" rx="0.6" fill="#e9ebed"/></g></svg>
<span class="t" style="left:184.2px;top:224px;font-size:7.4px;line-height:7.4px;color:#3a2a12;-webkit-text-stroke:0.1px;">Define the terminology used in the Act</span>
<div class="a" style="left:146.6px;top:249.8px;width:383px;height:34px;background:#f0a21c;border-radius:17px;border:1.1px solid #c98612;box-shadow:inset 0 0 0 0.8px #f7c14a;"></div>
<svg class="a" style="left:149.2px;top:250.9px;" width="32" height="32" viewBox="0 0 32 32"><circle cx="16" cy="16" r="14.9" fill="#3b4a55" stroke="#e3b23c" stroke-width="1.2"/><g transform="translate(15.9 15.9)"><path d="M0,-9.6L9.2,-6.6V-0.5Q9.2,7 0,11.2Q-9.2,7 -9.2,-0.5V-6.6Z" fill="none" stroke="#e9ebed" stroke-width="1.2"/><path d="M0,-7.4L7.2,-5V-0.5Q7.2,5.6 0,9" fill="none" stroke="#e9ebed" stroke-width="0.5"/><circle cx="0" cy="0.4" r="5.4" fill="none" stroke="#e9ebed" stroke-width="0.9"/><circle cx="0" cy="0.4" r="3.2" fill="none" stroke="#e9ebed" stroke-width="0.8"/><circle cx="0" cy="-0.6" r="1.3" fill="#e9ebed"/><path d="M-2.2,3.4Q0,0.6 2.2,3.4" stroke="#e9ebed" stroke-width="0.9" fill="none"/><path d="M0,5.8V9.6M-5.4,0.4H-8M5.4,0.4H8" stroke="#e9ebed" stroke-width="0.7"/></g></svg>
<span class="t" style="left:184.2px;top:264px;font-size:7.4px;line-height:7.4px;color:#3a2a12;-webkit-text-stroke:0.1px;">Know about Consumer Rights</span>
<div class="a" style="left:146.6px;top:290px;width:383px;height:34px;background:#f0a21c;border-radius:17px;border:1.1px solid #c98612;box-shadow:inset 0 0 0 0.8px #f7c14a;"></div>
<svg class="a" style="left:149.2px;top:291.1px;" width="32" height="32" viewBox="0 0 32 32"><circle cx="16" cy="16" r="14.9" fill="#3b4a55" stroke="#e3b23c" stroke-width="1.2"/><g transform="translate(15.9 15.9)"><rect x="-9.6" y="-7.4" width="9.4" height="15.6" rx="0.8" fill="none" stroke="#e9ebed" stroke-width="1.1"/><rect x="-7.2" y="-9" width="4.6" height="2.6" rx="0.6" fill="#e9ebed"/><rect x="-7.6" y="-4.6" width="5.4" height="8" fill="#e9ebed" opacity="0.75"/><path d="M-1.6,6.4L5.4,-1.2" stroke="#e9ebed" stroke-width="1.5"/><path d="M2.2,-3.4L5,-5.6 8.6,-1.6 5.8,0.6z" fill="#e9ebed"/><path d="M3.2,7.6a3,2.4 0 0 1 6,0z" fill="#e9ebed"/><rect x="2.4" y="7.4" width="7.6" height="1.2" fill="#e9ebed"/></g></svg>
<span class="t" style="left:184.2px;top:299px;font-size:7.4px;line-height:7.4px;color:#3a2a12;-webkit-text-stroke:0.1px;">Understand about Central Consumer</span>
<span class="t" style="left:184.2px;top:308px;font-size:7.4px;line-height:7.4px;color:#3a2a12;-webkit-text-stroke:0.1px;">Protection Authority</span>
<div class="a" style="left:146.6px;top:330.2px;width:383px;height:34px;background:#f0a21c;border-radius:17px;border:1.1px solid #c98612;box-shadow:inset 0 0 0 0.8px #f7c14a;"></div>
<svg class="a" style="left:149.2px;top:331.3px;" width="32" height="32" viewBox="0 0 32 32"><circle cx="16" cy="16" r="14.9" fill="#3b4a55" stroke="#e3b23c" stroke-width="1.2"/><g transform="translate(15.9 15.9)"><path d="M0,-8.6V7.4" stroke="#e9ebed" stroke-width="2"/><path d="M-9.4,-6.6Q-5,-8.2 0,-6.2Q5,-8.2 9.4,-6.6" stroke="#e9ebed" stroke-width="1.7" fill="none"/><path d="M-9.8,-6.2L-12,1.6M-9,-6.2L-6.2,1.6M9.8,-6.2L12,1.6M9,-6.2L6.2,1.6" stroke="#e9ebed" stroke-width="0.7" fill="none" transform="scale(0.86 1)"/><path d="M-11.2,1.6a3.2,3.4 0 0 0 6.6,0zM4.6,1.6a3.2,3.4 0 0 0 6.6,0z" fill="#e9ebed"/><path d="M-4.6,9.4Q-4.6,7 0,7Q4.6,7 4.6,9.4z" fill="#e9ebed"/><rect x="-5.6" y="9" width="11.2" height="1.4" fill="#e9ebed"/><circle cx="0" cy="-8.6" r="1.3" fill="#e9ebed"/></g></svg>
<span class="t" style="left:184.2px;top:339px;font-size:7.4px;line-height:7.4px;color:#3a2a12;-webkit-text-stroke:0.1px;">State about Consumer Disputes Redressal</span>
<span class="t" style="left:184.2px;top:348px;font-size:7.4px;line-height:7.4px;color:#3a2a12;-webkit-text-stroke:0.1px;">Commission</span>
<svg class="a" style="left:525.6px;top:344.6px;" width="4" height="4.4" viewBox="0 0 4 4.4"><path d="M0.6,0.6q2.6,1.6 0,3.2" stroke="#6a4a10" stroke-width="0.8" fill="none"/></svg>
<svg class="a" style="left:120.5px;top:382.6px;" width="9" height="8.6" viewBox="0 0 9 8.6"><path d="M0.4,2.8h2.2l2.8,-2.4v8l-2.8,-2.4h-2.2z" fill="#8a8e94"/><path d="M6.4,2.6q1.2,1.7 0,3.4M7.6,1.4q2.2,2.9 0,5.8" stroke="#8a8e94" stroke-width="0.7" fill="none"/></svg>
<div class="a" style="left:109px;top:413.4px;width:445.4px;height:12.1px;background:#abb5c3;"></div>
<div class="a" style="left:110px;top:413.6px;width:11.5px;height:11.3px;background:#fafbfc;border:0.8px solid #dfe2e6;"></div>
<svg class="a" style="left:114px;top:417.4px;" width="3" height="4" viewBox="0 0 3 4"><polygon points="3,0 3,4 0,2" fill="#9a9da1"/></svg>
<div class="a" style="left:542.7px;top:413.6px;width:11px;height:11.3px;background:#fafbfc;border:0.8px solid #dfe2e6;"></div>
<svg class="a" style="left:546.8px;top:417.4px;" width="3" height="4" viewBox="0 0 3 4"><polygon points="0,0 0,4 3,2" fill="#9a9da1"/></svg>
<div class="a" style="left:109px;top:425.5px;width:445.4px;height:148.5px;background:#ffffff;"></div>
<span class="t" style="left:124.7px;top:436px;font-size:10px;line-height:10px;color:#2a7fc2;-webkit-text-stroke:0.2px;transform:scaleX(0.957);">Timeline</span>
<span class="t" style="left:175.4px;top:436px;font-size:10px;line-height:10px;color:#6e7174;-webkit-text-stroke:0.2px;transform:scaleX(0.832);">States</span>
<span class="t" style="left:215px;top:436px;font-size:10px;line-height:10px;color:#6e7174;-webkit-text-stroke:0.2px;transform:scaleX(0.919);">Notes</span>
<svg class="a" style="left:500.2px;top:434px;" width="8.4" height="9.6" viewBox="0 0 8.4 9.6"><polygon points="2.4,0.2 5.8,0.2 4.1,2.2" fill="#2b7fc8"/><path d="M4.1,2v7.2" stroke="#9aa0a6" stroke-width="0.8"/><ellipse cx="3.6" cy="4.4" rx="3" ry="1.3" fill="none" stroke="#9aa0a6" stroke-width="0.8"/><ellipse cx="4.6" cy="6.8" rx="3.4" ry="1.4" fill="none" stroke="#9aa0a6" stroke-width="0.8"/></svg>
<svg class="a" style="left:521.745px;top:437.853px;" width="3.91" height="2.295" viewBox="0 0 3.91 2.295"><polygon points="0,0 3.91,0 1.95,2.29" fill="#a8abae"/></svg>
<svg class="a" style="left:531.3px;top:434.8px;" width="8" height="8" viewBox="0 0 8 8"><rect x="0.5" y="2.6" width="5.8" height="4.8" fill="none" stroke="#a8abae" stroke-width="0.9"/><path d="M1.8,2.4V0.8h5.6v4.6H6.4" fill="none" stroke="#a8abae" stroke-width="0.9"/><rect x="1.6" y="0.5" width="6" height="1.2" fill="#a8abae"/></svg>
<div class="a" style="left:109px;top:450.4px;width:434.5px;height:16.4px;background:#f1f3f5;"></div>
<div class="a" style="left:109px;top:466.8px;width:434.5px;height:0.7px;background:#e3e6e9;"></div>
<div class="a" style="left:125.3px;top:454.2px;width:10.8px;height:10px;background:#ffffff;border:0.7px solid #e2e5e8;"></div>
<svg class="a" style="left:127.1px;top:456.8px;" width="7.2" height="4.8" viewBox="0 0 7.2 4.8"><path d="M0.3,2.4Q3.6,-1.2 6.9,2.4Q3.6,6 0.3,2.4z" fill="#fff" stroke="#8a8d91" stroke-width="0.7"/><circle cx="3.6" cy="2.4" r="1.45" fill="#45484c"/></svg>
<div class="a" style="left:146.6px;top:454.2px;width:10.8px;height:10px;background:#ffffff;border:0.7px solid #e2e5e8;"></div>
<svg class="a" style="left:148.2px;top:455.6px;" width="5.6" height="6.8" viewBox="0 0 5.6 6.8"><path d="M1.3,3V2.2a1.5,1.5 0 0 1 3,0V3" stroke="#45484c" stroke-width="0.9" fill="none"/><rect x="0.3" y="3" width="5" height="3.5" rx="0.5" fill="#45484c"/></svg>
<div class="a" style="left:244.6px;top:451.5px;width:0.7px;height:110px;background:#e3e6e9;"></div>
<span class="t" style="left:250px;top:456px;font-size:6.2px;line-height:6.2px;color:#74777b;transform:scaleX(0.967);-webkit-text-stroke:0.1px;">00:19</span>
<span class="t" style="left:277.5px;top:456px;font-size:6.2px;line-height:6.2px;color:#74777b;transform:scaleX(1.031);-webkit-text-stroke:0.1px;">00:20</span>
<span class="t" style="left:306.5px;top:456px;font-size:6.2px;line-height:6.2px;color:#74777b;transform:scaleX(0.999);-webkit-text-stroke:0.1px;">00:21</span>
<span class="t" style="left:508.4px;top:456px;font-size:6.2px;line-height:6.2px;color:#74777b;transform:scaleX(1.038);-webkit-text-stroke:0.1px;">00:28</span>
<span class="t" style="left:537.4px;top:456px;font-size:6.2px;line-height:6.2px;color:#74777b;-webkit-text-stroke:0.1px;">0</span>
<div class="a" style="left:256.2px;top:463.6px;width:0.6px;height:3.4px;background:#d9dcdf;"></div>
<div class="a" style="left:261.03px;top:464.8px;width:0.6px;height:2.2px;background:#d9dcdf;"></div>
<div class="a" style="left:265.86px;top:464.8px;width:0.6px;height:2.2px;background:#d9dcdf;"></div>
<div class="a" style="left:270.69px;top:464.8px;width:0.6px;height:2.2px;background:#d9dcdf;"></div>
<div class="a" style="left:275.52px;top:464.8px;width:0.6px;height:2.2px;background:#d9dcdf;"></div>
<div class="a" style="left:280.35px;top:464.8px;width:0.6px;height:2.2px;background:#d9dcdf;"></div>
<div class="a" style="left:285.18px;top:463.6px;width:0.6px;height:3.4px;background:#d9dcdf;"></div>
<div class="a" style="left:290.01px;top:464.8px;width:0.6px;height:2.2px;background:#d9dcdf;"></div>
<div class="a" style="left:294.84px;top:464.8px;width:0.6px;height:2.2px;background:#d9dcdf;"></div>
<div class="a" style="left:299.67px;top:464.8px;width:0.6px;height:2.2px;background:#d9dcdf;"></div>
<div class="a" style="left:304.5px;top:464.8px;width:0.6px;height:2.2px;background:#d9dcdf;"></div>
<div class="a" style="left:309.33px;top:464.8px;width:0.6px;height:2.2px;background:#d9dcdf;"></div>
<div class="a" style="left:314.16px;top:463.6px;width:0.6px;height:3.4px;background:#d9dcdf;"></div>
<div class="a" style="left:318.99px;top:464.8px;width:0.6px;height:2.2px;background:#d9dcdf;"></div>
<div class="a" style="left:323.82px;top:464.8px;width:0.6px;height:2.2px;background:#d9dcdf;"></div>
<div class="a" style="left:328.65px;top:464.8px;width:0.6px;height:2.2px;background:#d9dcdf;"></div>
<div class="a" style="left:333.48px;top:464.8px;width:0.6px;height:2.2px;background:#d9dcdf;"></div>
<div class="a" style="left:338.31px;top:464.8px;width:0.6px;height:2.2px;background:#d9dcdf;"></div>
<div class="a" style="left:343.14px;top:463.6px;width:0.6px;height:3.4px;background:#d9dcdf;"></div>
<div class="a" style="left:347.97px;top:464.8px;width:0.6px;height:2.2px;background:#d9dcdf;"></div>
<div class="a" style="left:352.8px;top:464.8px;width:0.6px;height:2.2px;background:#d9dcdf;"></div>
<div class="a" style="left:357.63px;top:464.8px;width:0.6px;height:2.2px;background:#d9dcdf;"></div>
<div class="a" style="left:362.46px;top:464.8px;width:0.6px;height:2.2px;background:#d9dcdf;"></div>
<div class="a" style="left:367.29px;top:464.8px;width:0.6px;height:2.2px;background:#d9dcdf;"></div>
<div class="a" style="left:372.12px;top:463.6px;width:0.6px;height:3.4px;background:#d9dcdf;"></div>
<div class="a" style="left:376.95px;top:464.8px;width:0.6px;height:2.2px;background:#d9dcdf;"></div>
<div class="a" style="left:381.78px;top:464.8px;width:0.6px;height:2.2px;background:#d9dcdf;"></div>
<div class="a" style="left:386.61px;top:464.8px;width:0.6px;height:2.2px;background:#d9dcdf;"></div>
<div class="a" style="left:391.44px;top:464.8px;width:0.6px;height:2.2px;background:#d9dcdf;"></div>
<div class="a" style="left:396.27px;top:464.8px;width:0.6px;height:2.2px;background:#d9dcdf;"></div>
<div class="a" style="left:401.1px;top:463.6px;width:0.6px;height:3.4px;background:#d9dcdf;"></div>
<div class="a" style="left:405.93px;top:464.8px;width:0.6px;height:2.2px;background:#d9dcdf;"></div>
<div class="a" style="left:410.76px;top:464.8px;width:0.6px;height:2.2px;background:#d9dcdf;"></div>
<div class="a" style="left:415.59px;top:464.8px;width:0.6px;height:2.2px;background:#d9dcdf;"></div>
<div class="a" style="left:420.42px;top:464.8px;width:0.6px;height:2.2px;background:#d9dcdf;"></div>
<div class="a" style="left:425.25px;top:464.8px;width:0.6px;height:2.2px;background:#d9dcdf;"></div>
<div class="a" style="left:430.08px;top:463.6px;width:0.6px;height:3.4px;background:#d9dcdf;"></div>
<div class="a" style="left:434.91px;top:464.8px;width:0.6px;height:2.2px;background:#d9dcdf;"></div>
<div class="a" style="left:439.74px;top:464.8px;width:0.6px;height:2.2px;background:#d9dcdf;"></div>
<div class="a" style="left:444.57px;top:464.8px;width:0.6px;height:2.2px;background:#d9dcdf;"></div>
<div class="a" style="left:449.4px;top:464.8px;width:0.6px;height:2.2px;background:#d9dcdf;"></div>
<div class="a" style="left:454.23px;top:464.8px;width:0.6px;height:2.2px;background:#d9dcdf;"></div>
<div class="a" style="left:459.06px;top:463.6px;width:0.6px;height:3.4px;background:#d9dcdf;"></div>
<div class="a" style="left:463.89px;top:464.8px;width:0.6px;height:2.2px;background:#d9dcdf;"></div>
<div class="a" style="left:468.72px;top:464.8px;width:0.6px;height:2.2px;background:#d9dcdf;"></div>
<div class="a" style="left:473.55px;top:464.8px;width:0.6px;height:2.2px;background:#d9dcdf;"></div>
<div class="a" style="left:478.38px;top:464.8px;width:0.6px;height:2.2px;background:#d9dcdf;"></div>
<div class="a" style="left:483.21px;top:464.8px;width:0.6px;height:2.2px;background:#d9dcdf;"></div>
<div class="a" style="left:488.04px;top:463.6px;width:0.6px;height:3.4px;background:#d9dcdf;"></div>
<div class="a" style="left:492.87px;top:464.8px;width:0.6px;height:2.2px;background:#d9dcdf;"></div>
<div class="a" style="left:497.7px;top:464.8px;width:0.6px;height:2.2px;background:#d9dcdf;"></div>
<div class="a" style="left:502.53px;top:464.8px;width:0.6px;height:2.2px;background:#d9dcdf;"></div>
<div class="a" style="left:507.36px;top:464.8px;width:0.6px;height:2.2px;background:#d9dcdf;"></div>
<div class="a" style="left:512.19px;top:464.8px;width:0.6px;height:2.2px;background:#d9dcdf;"></div>
<div class="a" style="left:517.02px;top:463.6px;width:0.6px;height:3.4px;background:#d9dcdf;"></div>
<div class="a" style="left:521.85px;top:464.8px;width:0.6px;height:2.2px;background:#d9dcdf;"></div>
<div class="a" style="left:526.68px;top:464.8px;width:0.6px;height:2.2px;background:#d9dcdf;"></div>
<div class="a" style="left:531.51px;top:464.8px;width:0.6px;height:2.2px;background:#d9dcdf;"></div>
<div class="a" style="left:536.34px;top:464.8px;width:0.6px;height:2.2px;background:#d9dcdf;"></div>
<div class="a" style="left:541.17px;top:464.8px;width:0.6px;height:2.2px;background:#d9dcdf;"></div>
<div class="a" style="left:546px;top:463.6px;width:0.6px;height:3.4px;background:#d9dcdf;"></div>
<div class="a" style="left:550.83px;top:464.8px;width:0.6px;height:2.2px;background:#d9dcdf;"></div>
<div class="a" style="left:109px;top:484.7px;width:434.5px;height:0.7px;background:#f1f2f4;"></div>
<div class="a" style="left:125.3px;top:471.1px;width:10.8px;height:10px;background:#ffffff;border:0.7px solid #e2e5e8;"></div>
<svg class="a" style="left:127.1px;top:473.7px;" width="7.2" height="4.8" viewBox="0 0 7.2 4.8"><path d="M0.3,2.4Q3.6,-1.2 6.9,2.4Q3.6,6 0.3,2.4z" fill="#fff" stroke="#8a8d91" stroke-width="0.7"/><circle cx="3.6" cy="2.4" r="1.45" fill="#45484c"/></svg>
<div class="a" style="left:147px;top:471.1px;width:10px;height:10px;background:#ffffff;border:0.8px solid #cfd2d5;"></div>
<span class="t" style="left:170.3px;top:473px;font-size:7.4px;line-height:7.4px;color:#6a6d70;-webkit-text-stroke:0.2px;transform:scaleX(0.926);">Rectangle 26</span>
<div class="a" style="left:109px;top:502.15px;width:434.5px;height:0.7px;background:#f1f2f4;"></div>
<div class="a" style="left:245.3px;top:485.35px;width:252px;height:16.6px;background:#ebedef;"></div>
<div class="a" style="left:125.3px;top:488.55px;width:10.8px;height:10px;background:#ffffff;border:0.7px solid #e2e5e8;"></div>
<svg class="a" style="left:127.1px;top:491.15px;" width="7.2" height="4.8" viewBox="0 0 7.2 4.8"><path d="M0.3,2.4Q3.6,-1.2 6.9,2.4Q3.6,6 0.3,2.4z" fill="#fff" stroke="#8a8d91" stroke-width="0.7"/><circle cx="3.6" cy="2.4" r="1.45" fill="#45484c"/></svg>
<div class="a" style="left:147px;top:488.55px;width:10px;height:10px;background:#ffffff;border:0.8px solid #cfd2d5;"></div>
<svg class="a" style="left:115.6px;top:491.15px;" width="3" height="4.8" viewBox="0 0 3 4.8"><polygon points="0,0 0,4.8 3,2.4" fill="#8a8d91"/></svg>
<span class="t" style="left:170.3px;top:490px;font-size:7.4px;line-height:7.4px;color:#6a6d70;-webkit-text-stroke:0.2px;transform:scaleX(0.891);">Group 13</span>
<div class="a" style="left:109px;top:519.6px;width:434.5px;height:0.7px;background:#f1f2f4;"></div>
<div class="a" style="left:125.3px;top:506px;width:10.8px;height:10px;background:#ffffff;border:0.7px solid #e2e5e8;"></div>
<svg class="a" style="left:127.1px;top:508.6px;" width="7.2" height="4.8" viewBox="0 0 7.2 4.8"><path d="M0.3,2.4Q3.6,-1.2 6.9,2.4Q3.6,6 0.3,2.4z" fill="#fff" stroke="#8a8d91" stroke-width="0.7"/><circle cx="3.6" cy="2.4" r="1.45" fill="#45484c"/></svg>
<div class="a" style="left:147px;top:506px;width:10px;height:10px;background:#ffffff;border:0.8px solid #cfd2d5;"></div>
<span class="t" style="left:170.3px;top:508px;font-size:7.4px;line-height:7.4px;color:#6a6d70;-webkit-text-stroke:0.2px;transform:scaleX(0.921);">Text-to-Speech 1</span>
<div class="a" style="left:109px;top:537.05px;width:434.5px;height:0.7px;background:#f1f2f4;"></div>
<div class="a" style="left:125.3px;top:523.45px;width:10.8px;height:10px;background:#ffffff;border:0.7px solid #e2e5e8;"></div>
<svg class="a" style="left:127.1px;top:526.05px;" width="7.2" height="4.8" viewBox="0 0 7.2 4.8"><path d="M0.3,2.4Q3.6,-1.2 6.9,2.4Q3.6,6 0.3,2.4z" fill="#fff" stroke="#8a8d91" stroke-width="0.7"/><circle cx="3.6" cy="2.4" r="1.45" fill="#45484c"/></svg>
<div class="a" style="left:147px;top:523.45px;width:10px;height:10px;background:#ffffff;border:0.8px solid #cfd2d5;"></div>
<svg class="a" style="left:115.6px;top:526.05px;" width="3" height="4.8" viewBox="0 0 3 4.8"><polygon points="0,0 0,4.8 3,2.4" fill="#8a8d91"/></svg>
<span class="t" style="left:170.3px;top:525px;font-size:7.4px;line-height:7.4px;color:#6a6d70;-webkit-text-stroke:0.2px;transform:scaleX(0.891);">Group 12</span>
<div class="a" style="left:109px;top:554.5px;width:434.5px;height:0.7px;background:#f1f2f4;"></div>
<div class="a" style="left:125.3px;top:540.9px;width:10.8px;height:10px;background:#ffffff;border:0.7px solid #e2e5e8;"></div>
<svg class="a" style="left:127.1px;top:543.5px;" width="7.2" height="4.8" viewBox="0 0 7.2 4.8"><path d="M0.3,2.4Q3.6,-1.2 6.9,2.4Q3.6,6 0.3,2.4z" fill="#fff" stroke="#8a8d91" stroke-width="0.7"/><circle cx="3.6" cy="2.4" r="1.45" fill="#45484c"/></svg>
<div class="a" style="left:147px;top:540.9px;width:10px;height:10px;background:#ffffff;border:0.8px solid #cfd2d5;"></div>
<svg class="a" style="left:115.6px;top:543.5px;" width="3" height="4.8" viewBox="0 0 3 4.8"><polygon points="0,0 0,4.8 3,2.4" fill="#8a8d91"/></svg>
<span class="t" style="left:170.3px;top:543px;font-size:7.4px;line-height:7.4px;color:#6a6d70;-webkit-text-stroke:0.2px;transform:scaleX(0.916);">Group 8</span>
<div class="a" style="left:109px;top:571.95px;width:434.5px;height:0.7px;background:#f1f2f4;"></div>
<svg class="a" style="left:115.8px;top:561.15px;" width="2.8" height="4.4" viewBox="0 0 2.8 4.4"><polygon points="0,0 0,4.4 2.8,2.2" fill="#85888c"/></svg>
<div class="a" style="left:125.3px;top:558.35px;width:10.8px;height:10px;background:#ffffff;border:0.7px solid #e2e5e8;"></div>
<svg class="a" style="left:127.1px;top:560.95px;" width="7.2" height="4.8" viewBox="0 0 7.2 4.8"><path d="M0.3,2.4Q3.6,-1.2 6.9,2.4Q3.6,6 0.3,2.4z" fill="#fff" stroke="#8a8d91" stroke-width="0.7"/><circle cx="3.6" cy="2.4" r="1.45" fill="#45484c"/></svg>
<div class="a" style="left:147px;top:558.35px;width:10px;height:10px;background:#ffffff;border:0.8px solid #cfd2d5;"></div>
<div class="a" style="left:245.3px;top:503.4px;width:252px;height:14px;background:#eceef1;border-top:0.6px solid #dde0e4;border-bottom:0.6px solid #dde0e4;"></div>
<svg class="a" style="left:245.5px;top:505.4px;" width="92" height="10" viewBox="0 0 92 10"><rect x="0" y="4.7" width="92" height="0.7" fill="#7d8185"/><rect x="0" y="4.3" width="1" height="1.3" fill="#72767a"/><rect x="1" y="4.3" width="1" height="1.5" fill="#72767a"/><rect x="2" y="4.0" width="1" height="2.0" fill="#72767a"/><rect x="3" y="3.1" width="1" height="3.9" fill="#72767a"/><rect x="4" y="3.0" width="1" height="4.0" fill="#72767a"/><rect x="5" y="2.8" width="1" height="4.3" fill="#72767a"/><rect x="6" y="3.6" width="1" height="2.7" fill="#72767a"/><rect x="7" y="3.0" width="1" height="4.0" fill="#72767a"/><rect x="8" y="2.7" width="1" height="4.5" fill="#72767a"/><rect x="9" y="2.4" width="1" height="5.2" fill="#72767a"/><rect x="10" y="3.8" width="1" height="2.4" fill="#72767a"/><rect x="11" y="4.4" width="1" height="1.1" fill="#72767a"/><rect x="12" y="4.6" width="1" height="0.8" fill="#72767a"/><rect x="13" y="2.4" width="1" height="5.2" fill="#72767a"/><rect x="14" y="2.6" width="1" height="4.8" fill="#72767a"/><rect x="15" y="3.9" width="1" height="2.2" fill="#72767a"/><rect x="16" y="2.0" width="1" height="5.9" fill="#72767a"/><rect x="17" y="2.1" width="1" height="5.9" fill="#72767a"/><rect x="18" y="2.7" width="1" height="4.6" fill="#72767a"/><rect x="19" y="2.8" width="1" height="4.5" fill="#72767a"/><rect x="20" y="3.7" width="1" height="2.6" fill="#72767a"/><rect x="21" y="4.6" width="1" height="0.7" fill="#72767a"/><rect x="22" y="4.3" width="1" height="1.4" fill="#72767a"/><rect x="23" y="3.9" width="1" height="2.2" fill="#72767a"/><rect x="24" y="3.6" width="1" height="2.8" fill="#72767a"/><rect x="25" y="3.5" width="1" height="3.0" fill="#72767a"/><rect x="26" y="3.9" width="1" height="2.1" fill="#72767a"/><rect x="27" y="3.1" width="1" height="3.9" fill="#72767a"/><rect x="28" y="3.1" width="1" height="3.8" fill="#72767a"/><rect x="29" y="2.3" width="1" height="5.4" fill="#72767a"/><rect x="30" y="3.0" width="1" height="4.1" fill="#72767a"/><rect x="31" y="2.7" width="1" height="4.6" fill="#72767a"/><rect x="32" y="3.0" width="1" height="4.0" fill="#72767a"/><rect x="33" y="2.7" width="1" height="4.6" fill="#72767a"/><rect x="34" y="3.1" width="1" height="3.8" fill="#72767a"/><rect x="35" y="3.4" width="1" height="3.1" fill="#72767a"/><rect x="36" y="4.0" width="1" height="2.1" fill="#72767a"/><rect x="37" y="4.0" width="1" height="2.1" fill="#72767a"/><rect x="38" y="4.1" width="1" height="1.9" fill="#72767a"/><rect x="39" y="4.2" width="1" height="1.7" fill="#72767a"/><rect x="62" y="4.4" width="1" height="1.1" fill="#72767a"/><rect x="63" y="4.5" width="1" height="1.0" fill="#72767a"/><rect x="64" y="3.4" width="1" height="3.2" fill="#72767a"/><rect x="65" y="3.9" width="1" height="2.3" fill="#72767a"/><rect x="66" y="2.5" width="1" height="5.1" fill="#72767a"/><rect x="67" y="3.2" width="1" height="3.6" fill="#72767a"/><rect x="68" y="2.3" width="1" height="5.4" fill="#72767a"/><rect x="69" y="3.2" width="1" height="3.5" fill="#72767a"/><rect x="70" y="2.1" width="1" height="5.8" fill="#72767a"/><rect x="71" y="2.3" width="1" height="5.4" fill="#72767a"/><rect x="72" y="4.0" width="1" height="2.0" fill="#72767a"/><rect x="73" y="4.5" width="1" height="1.0" fill="#72767a"/><rect x="74" y="4.0" width="1" height="2.0" fill="#72767a"/><rect x="75" y="3.1" width="1" height="3.9" fill="#72767a"/><rect x="76" y="2.0" width="1" height="5.9" fill="#72767a"/><rect x="77" y="3.2" width="1" height="3.6" fill="#72767a"/><rect x="78" y="3.9" width="1" height="2.3" fill="#72767a"/><rect x="79" y="2.7" width="1" height="4.5" fill="#72767a"/><rect x="80" y="2.4" width="1" height="5.1" fill="#72767a"/><rect x="81" y="3.5" width="1" height="3.1" fill="#72767a"/><rect x="82" y="3.8" width="1" height="2.3" fill="#72767a"/><rect x="83" y="3.3" width="1" height="3.3" fill="#72767a"/><rect x="84" y="2.1" width="1" height="5.9" fill="#72767a"/><rect x="85" y="2.5" width="1" height="5.0" fill="#72767a"/><rect x="86" y="3.8" width="1" height="2.5" fill="#72767a"/><rect x="87" y="3.5" width="1" height="3.0" fill="#72767a"/><rect x="88" y="3.8" width="1" height="2.4" fill="#72767a"/><rect x="89" y="3.9" width="1" height="2.2" fill="#72767a"/><rect x="90" y="2.4" width="1" height="5.2" fill="#72767a"/><rect x="91" y="3.6" width="1" height="2.7" fill="#72767a"/></svg>
<div class="a" style="left:286.3px;top:538.6px;width:60px;height:14px;background:#d9dde2;"></div>
<svg class="a" style="left:286.3px;top:538.6px;" width="10" height="14" viewBox="0 0 10 14"><polygon points="0,14 10,0 0,0" fill="#c3c8cf"/></svg>
<svg class="a" style="left:306.5px;top:541.6px;" width="8" height="8" viewBox="0 0 8 8"><rect x="1" y="1" width="6" height="6" fill="none" stroke="#4e5256" stroke-width="0.9" stroke-dasharray="1.6,0.9"/><rect x="2.8" y="2.8" width="2.4" height="2.4" fill="#4e5256"/></svg>
<span class="t" style="left:321.5px;top:543px;font-size:7px;line-height:7px;color:#55585c;-webkit-text-stroke:0.2px;">Group 8</span>
<span class="t" style="left:507.2px;top:470px;font-size:6px;line-height:6px;color:#c2c5c8;-webkit-text-stroke:0.2px;transform:scaleX(1.058);">End</span>
<div class="a" style="left:502.7px;top:466px;width:0.9px;height:95px;background:#4f98d6;"></div>
<svg class="a" style="left:498.7px;top:461.2px;" width="9.2" height="5.8" viewBox="0 0 9.2 5.8"><polygon points="0,0 9.2,0 4.6,5.8" fill="#2287d8"/></svg>
<div class="a" style="left:542.4px;top:451.5px;width:12px;height:110px;background:#e6e9ec;"></div>
<div class="a" style="left:542.4px;top:452px;width:12px;height:12px;background:#fdfdfd;border:0.8px solid #e1e4e8;"></div>
<svg class="a" style="left:546.6px;top:456.8px;" width="3.8" height="2.8" viewBox="0 0 3.8 2.8"><polygon points="0,2.8 3.8,2.8 1.9,0" fill="#9a9da1"/></svg>
<div class="a" style="left:542.4px;top:464.2px;width:12px;height:26.8px;background:#adb4be;"></div>
<div class="a" style="left:546.6px;top:475.6px;width:3.8px;height:0.7px;background:#eceef0;"></div>
<div class="a" style="left:546.6px;top:477.3px;width:3.8px;height:0.7px;background:#eceef0;"></div>
<div class="a" style="left:546.6px;top:479px;width:3.8px;height:0.7px;background:#eceef0;"></div>
<div class="a" style="left:542.4px;top:549px;width:12px;height:11.6px;background:#fdfdfd;border:0.8px solid #e1e4e8;"></div>
<svg class="a" style="left:546.6px;top:553.4px;" width="3.8" height="2.8" viewBox="0 0 3.8 2.8"><polygon points="0,0 3.8,0 1.9,2.8" fill="#9a9da1"/></svg>
<div class="a" style="left:109px;top:561.5px;width:445.4px;height:12.5px;background:#f1f3f5;"></div>
<div class="a" style="left:245.3px;top:561.5px;width:298px;height:12.5px;background:#e6e9ec;"></div>
<div class="a" style="left:256.8px;top:561.5px;width:266.8px;height:12.5px;background:#cdd1d6;"></div>
<div class="a" style="left:245.3px;top:561.5px;width:11.5px;height:12.5px;background:#fbfcfc;border:0.8px solid #dfe2e6;"></div>
<svg class="a" style="left:249.8px;top:565.8px;" width="3" height="4" viewBox="0 0 3 4"><polygon points="3,0 3,4 0,2" fill="#9a9da1"/></svg>
<div class="a" style="left:530px;top:561.5px;width:13px;height:12.5px;background:#fbfcfc;border:0.8px solid #dfe2e6;"></div>
<svg class="a" style="left:534.6px;top:565.8px;" width="3" height="4" viewBox="0 0 3 4"><polygon points="0,0 0,4 3,2" fill="#9a9da1"/></svg>
<svg class="a" style="left:115.6px;top:564.6px;" width="4" height="6" viewBox="0 0 4 6"><polygon points="0,0 0,6 4,3" fill="#74777b"/></svg>
<div class="a" style="left:128.4px;top:565px;width:5.4px;height:5.4px;background:#7d8084;"></div>
<svg class="a" style="left:152.6px;top:566.4px;" width="5" height="3.6" viewBox="0 0 5 3.6"><polygon points="0,3.6 5,3.6 2.5,0" fill="#74777b"/></svg>
<div class="a" style="left:165.5px;top:568px;width:17px;height:0.8px;background:#6a6d70;"></div>
<div class="a" style="left:168px;top:566.2px;width:3.6px;height:3.6px;background:#ffffff;border:0.8px solid #55585c;border-radius:50%;"></div>
<svg class="a" style="left:188.6px;top:564.6px;" width="15" height="5.4" viewBox="0 0 15 5.4"><polygon points="0,5.4 6,5.4 3,1.6" fill="#74777b"/><polygon points="5.5,5.4 14.5,5.4 10,0" fill="#74777b"/></svg>
<span class="t" style="left:214px;top:566px;font-size:6.4px;line-height:6.4px;color:#6a6d70;-webkit-text-stroke:0.2px;transform:scaleX(1.004);">00:27.50</span>
<div class="a" style="left:0px;top:573.8px;width:768px;height:18.2px;background:#2d2b2f;"></div>
<div class="a" style="left:626.4px;top:574px;width:13.6px;height:18px;background:#1b191d;"></div>
<span class="t" style="left:2px;top:581px;font-size:6.4px;line-height:6.4px;color:#9d9fa3;-webkit-text-stroke:0.2px;transform:scaleX(1.040);">Slide 3 of 15</span>
<span class="t" style="left:49px;top:581px;font-size:6.4px;line-height:6.4px;color:#9d9fa3;-webkit-text-stroke:0.2px;transform:scaleX(1.068);">960 × 600</span>
<span class="t" style="left:89.4px;top:581px;font-size:6.4px;line-height:6.4px;color:#9d9fa3;-webkit-text-stroke:0.2px;transform:scaleX(1.130);">‘Clean’</span>
<svg class="a" style="left:614px;top:578px;" width="8" height="8" viewBox="0 0 8 8"><rect x="0.3" y="0.3" width="3" height="3" fill="#e8e8ea"/><rect x="4.4" y="0.3" width="3" height="3" fill="#e8e8ea"/><rect x="0.3" y="4.4" width="3" height="3" fill="#e8e8ea"/><rect x="4.4" y="4.4" width="3" height="3" fill="#e8e8ea"/></svg>
<svg class="a" style="left:629px;top:578px;" width="8" height="8" viewBox="0 0 8 8"><rect x="0.5" y="0.5" width="7" height="7" fill="none" stroke="#e8e8ea" stroke-width="1"/><rect x="0.5" y="0.5" width="3" height="7" fill="#e8e8ea"/><rect x="4.6" y="2" width="2" height="2" fill="#e8e8ea"/></svg>
<svg class="a" style="left:643.8px;top:578px;" width="8" height="8" viewBox="0 0 8 8"><path d="M0.4,0.8h7.2M1.2,0.8v3.4h5.6v-3.4M4,4.2v2M2.2,7.6l1.8-1.6 1.8,1.6" stroke="#b9babd" stroke-width="0.9" fill="none"/></svg>
<span class="t" style="left:657.8px;top:581px;font-size:6.6px;line-height:6.6px;color:#a3a5a9;-webkit-text-stroke:0.2px;transform:scaleX(0.893);">70%</span>
<div class="a" style="left:675.6px;top:581.4px;width:4px;height:0.9px;background:#b9babd;"></div>
<div class="a" style="left:684.2px;top:581.4px;width:59.6px;height:0.9px;background:#d4d5d7;"></div>
<div class="a" style="left:714.6px;top:579.6px;width:0.9px;height:4.4px;background:#d4d5d7;"></div>
<div class="a" style="left:701.6px;top:579.2px;width:5.2px;height:5.2px;background:#2d2b2f;border:1px solid #d4d5d7;border-radius:50%;"></div>
<div class="a" style="left:747px;top:581.4px;width:4.6px;height:0.9px;background:#d4d5d7;"></div>
<div class="a" style="left:748.9px;top:579.5px;width:0.9px;height:4.7px;background:#d4d5d7;"></div>
<svg class="a" style="left:755.7px;top:577.6px;" width="8.6" height="8.6" viewBox="0 0 8.6 8.6"><rect x="0.5" y="0.5" width="7.6" height="7.6" fill="none" stroke="#c9cacc" stroke-width="0.9"/><path d="M2,3.4V2h1.4M5.2,2h1.4v1.4M6.6,5.2v1.4H5.2M3.4,6.6H2V5.2" stroke="#c9cacc" stroke-width="0.8" fill="none"/></svg>
<div class="a" style="left:554.4px;top:108px;width:213.6px;height:466px;background:#ffffff;"></div>
<div class="a" style="left:554.4px;top:108px;width:213.6px;height:49px;background:#f3f4f7;"></div>
<span class="t" style="left:567.8px;top:116px;font-size:9.6px;line-height:9.6px;color:#6c6f72;-webkit-text-stroke:0.2px;transform:scaleX(0.970);">Triggers</span>
<svg class="a" style="left:738.045px;top:118.153px;" width="3.91" height="2.295" viewBox="0 0 3.91 2.295"><polygon points="0,0 3.91,0 1.95,2.29" fill="#a8abae"/></svg>
<svg class="a" style="left:748.4px;top:115px;" width="8" height="8" viewBox="0 0 8 8"><rect x="0.5" y="2.6" width="5.8" height="4.8" fill="none" stroke="#a8abae" stroke-width="0.9"/><path d="M1.8,2.4V0.8h5.6v4.6H6.4" fill="none" stroke="#a8abae" stroke-width="0.9"/><rect x="1.6" y="0.5" width="6" height="1.2" fill="#a8abae"/></svg>
<div class="a" style="left:569px;top:131.7px;width:16.2px;height:17px;background:#ffffff;border:0.8px solid #d4d7db;"></div>
<div class="a" style="left:587px;top:131.7px;width:16.2px;height:17px;background:#f6f7f8;border:0.8px solid #dcdfe2;"></div>
<div class="a" style="left:605px;top:131.7px;width:16.2px;height:17px;background:#f6f7f8;border:0.8px solid #dcdfe2;"></div>
<div class="a" style="left:623px;top:131.7px;width:16.2px;height:17px;background:#f6f7f8;border:0.8px solid #dcdfe2;"></div>
<div class="a" style="left:641px;top:131.7px;width:16.2px;height:17px;background:#f6f7f8;border:0.8px solid #dcdfe2;"></div>
<div class="a" style="left:658.6px;top:131.7px;width:16.2px;height:17px;background:#f6f7f8;border:0.8px solid #dcdfe2;"></div>
<svg class="a" style="left:573.2px;top:135.2px;" width="8" height="10" viewBox="0 0 8 10"><path d="M0.6,0.6h4.4l2.4,2.4v6.4h-6.8z" fill="#fff" stroke="#55585c" stroke-width="0.9"/><path d="M5,0.6v2.4h2.4" fill="none" stroke="#55585c" stroke-width="0.8"/></svg>
<svg class="a" style="left:591px;top:135.4px;" width="9" height="9" viewBox="0 0 9 9"><rect x="0.6" y="1.4" width="6.6" height="7" fill="none" stroke="#a3a6aa" stroke-width="0.8"/><path d="M3,6l0.5-1.8 3.6-3.6 1.3,1.3-3.6,3.6z" fill="#f6f7f8" stroke="#a3a6aa" stroke-width="0.7"/></svg>
<svg class="a" style="left:609px;top:135.2px;" width="9" height="10" viewBox="0 0 9 10"><path d="M0.6,0.6h4l1.4,1.4v5.4h-5.4z" fill="none" stroke="#a3a6aa" stroke-width="0.8"/><path d="M2.8,2.6h3.8l1.6,1.6v5.2h-5.4z" fill="#f6f7f8" stroke="#a3a6aa" stroke-width="0.8"/></svg>
<svg class="a" style="left:627px;top:135.2px;" width="9" height="10" viewBox="0 0 9 10"><rect x="0.6" y="1.2" width="6" height="7.6" fill="none" stroke="#a3a6aa" stroke-width="0.8"/><rect x="2" y="0.3" width="3.2" height="1.8" fill="#a3a6aa"/><path d="M3.4,4h3.4l1.4,1.4v4h-4.8z" fill="#f6f7f8" stroke="#a3a6aa" stroke-width="0.8"/></svg>
<svg class="a" style="left:645.4px;top:135.2px;" width="8" height="10" viewBox="0 0 8 10"><path d="M0.4,2.2h7.2M2.8,2.2V0.8h2.4v1.4M1.2,2.2l0.6,7.2h4.4l0.6-7.2" fill="none" stroke="#a3a6aa" stroke-width="0.8"/><path d="M3,4v3.6M5,4v3.6" stroke="#a3a6aa" stroke-width="0.6"/></svg>
<div class="a" style="left:658.6px;top:139.9px;width:16.2px;height:0.7px;background:#dcdfe2;"></div>
<svg class="a" style="left:664.4px;top:134.6px;" width="4.6" height="3" viewBox="0 0 4.6 3"><polygon points="0,3 4.6,3 2.3,0" fill="#a3a6aa"/></svg>
<svg class="a" style="left:664.4px;top:142.6px;" width="4.6" height="3" viewBox="0 0 4.6 3"><polygon points="0,0 4.6,0 2.3,3" fill="#a3a6aa"/></svg>
<div class="a" style="left:699px;top:134.6px;width:10.6px;height:11px;background:#ffffff;border:0.8px solid #d0d3d7;"></div>
<span class="t" style="left:714px;top:137px;font-size:7.2px;line-height:7.2px;color:#74777b;-webkit-text-stroke:0.2px;transform:scaleX(1.049);">Group</span>
<div class="a" style="left:741.4px;top:131.7px;width:16.6px;height:17px;background:#ffffff;border:0.8px solid #d4d7db;"></div>
<svg class="a" style="left:745.4px;top:135.6px;" width="8.6" height="9" viewBox="0 0 8.6 9"><rect x="0.6" y="0.6" width="7.4" height="7.8" fill="#fff" stroke="#55585c" stroke-width="1"/><rect x="0.6" y="0.6" width="7.4" height="2.2" fill="#55585c"/><path d="M2.8,5.4h3.2M3.4,4.6l-0.8,0.8 0.8,0.8M5.2,4.6l0.8,0.8-0.8,0.8" stroke="#55585c" stroke-width="0.6" fill="none"/></svg>
<div class="a" style="left:558px;top:157px;width:210px;height:17px;background:#e9ebee;"></div>
<span class="t" style="left:562.8px;top:161px;font-size:8.4px;line-height:8.4px;color:#3d4043;transform:scaleX(0.987);-webkit-text-stroke:0.3px;">Slide Triggers</span>
<svg class="a" style="left:755.4px;top:161.6px;" width="5" height="8" viewBox="0 0 5 8"><path d="M0.4,0.5h4.2M0.4,7.5h4.2M2.5,1.4v5.2M1,2.8l1.5-1.5 1.5,1.5M1,5.2l1.5,1.5 1.5-1.5" stroke="#a8abae" stroke-width="0.6" fill="none"/></svg>
<svg class="a" style="left:562.7px;top:181.25px;" width="4.6" height="2.7" viewBox="0 0 4.6 2.7"><polygon points="0,0 4.60,0 2.30,2.70" fill="#9a9da1"/></svg>
<span class="t" style="left:578.4px;top:179px;font-size:7.2px;line-height:7.2px;color:#3a3d40;font-weight:bold;transform:scaleX(0.984);">Slide - 1.3 Module Objectives</span>
<div class="a" style="left:558px;top:190.8px;width:210px;height:0.7px;background:#e6e8eb;"></div>
<span class="t" style="left:578.4px;top:198px;font-size:6.9px;line-height:6.9px;color:#6e7174;-webkit-text-stroke:0.2px;transform:scaleX(1.017);">Show layer <span style="color:#2f6c9c">Instu</span></span>
<span class="t" style="left:587.3px;top:210px;font-size:6.9px;line-height:6.9px;color:#6e7174;-webkit-text-stroke:0.2px;transform:scaleX(1.038);">When the <span style="color:#66751f">timeline ends</span> on <span style="color:#2f6c9c">this slide</span></span>
<div class="a" style="left:558px;top:220.4px;width:210px;height:0.7px;background:#e6e8eb;"></div>
<div class="a" style="left:558px;top:221px;width:210px;height:17px;background:#e9ebee;"></div>
<span class="t" style="left:562.8px;top:225px;font-size:8.4px;line-height:8.4px;color:#3d4043;transform:scaleX(0.972);-webkit-text-stroke:0.3px;">Player Triggers</span>
<svg class="a" style="left:755.4px;top:225.6px;" width="5" height="8" viewBox="0 0 5 8"><path d="M0.4,0.5h4.2M0.4,7.5h4.2M2.5,1.4v5.2M1,2.8l1.5-1.5 1.5,1.5M1,5.2l1.5,1.5 1.5-1.5" stroke="#a8abae" stroke-width="0.6" fill="none"/></svg>
<svg class="a" style="left:562.7px;top:245.25px;" width="4.6" height="2.7" viewBox="0 0 4.6 2.7"><polygon points="0,0 4.60,0 2.30,2.70" fill="#9a9da1"/></svg>
<span class="t" style="left:578.4px;top:243px;font-size:7.2px;line-height:7.2px;color:#3a3d40;font-weight:bold;transform:scaleX(1.028);">Next Button / Swipe Next</span>
<div class="a" style="left:558px;top:254.8px;width:210px;height:0.7px;background:#e6e8eb;"></div>
<span class="t" style="left:578.4px;top:262px;font-size:6.9px;line-height:6.9px;color:#6e7174;-webkit-text-stroke:0.2px;transform:scaleX(1.030);">Jump to slide <span style="color:#2f6c9c">next slide</span></span>
<span class="t" style="left:587.3px;top:274px;font-size:6.9px;line-height:6.9px;color:#6e7174;-webkit-text-stroke:0.2px;transform:scaleX(1.017);">When the <span style="color:#66751f">user clicks</span> or <span style="color:#66751f">swipes</span> <span style="color:#2f6c9c">next</span></span>
<div class="a" style="left:558px;top:284.5px;width:210px;height:0.7px;background:#e6e8eb;"></div>
<svg class="a" style="left:562.7px;top:292.45px;" width="4.6" height="2.7" viewBox="0 0 4.6 2.7"><polygon points="0,0 4.60,0 2.30,2.70" fill="#9a9da1"/></svg>
<span class="t" style="left:578.4px;top:290px;font-size:7.2px;line-height:7.2px;color:#3a3d40;font-weight:bold;transform:scaleX(0.975);">Previous Button / Swipe Previous</span>
<div class="a" style="left:558px;top:302px;width:210px;height:0.7px;background:#e6e8eb;"></div>
<span class="t" style="left:578.4px;top:309px;font-size:6.9px;line-height:6.9px;color:#6e7174;-webkit-text-stroke:0.2px;transform:scaleX(1.038);">Jump to slide <span style="color:#2f6c9c">1.2 Navigation</span></span>
<span class="t" style="left:587.3px;top:321px;font-size:6.9px;line-height:6.9px;color:#6e7174;-webkit-text-stroke:0.2px;transform:scaleX(1.022);">When the <span style="color:#66751f">user clicks</span> or <span style="color:#66751f">swipes</span> <span style="color:#2f6c9c">previous</span></span>
<div class="a" style="left:558px;top:331.4px;width:210px;height:0.7px;background:#e6e8eb;"></div>
<div class="a" style="left:554.4px;top:393px;width:213.6px;height:50.4px;background:#f2f3f6;"></div>
<div class="a" style="left:554.4px;top:393px;width:213.6px;height:0.8px;background:#e1e4e8;"></div>
<span class="t" style="left:568px;top:401px;font-size:9.6px;line-height:9.6px;color:#6c6f72;-webkit-text-stroke:0.2px;transform:scaleX(0.970);">Comments</span>
<div class="a" style="left:712px;top:399.6px;width:22.5px;height:10.8px;background:linear-gradient(90deg,#2f86e6,#8a3fe0);border-radius:1.6px;"></div>
<span class="t" style="left:715.2px;top:403px;font-size:7px;line-height:7px;color:#ffffff;-webkit-text-stroke:0.2px;transform:scaleX(1.097);">Beta</span>
<svg class="a" style="left:738.6px;top:403px;" width="3.2" height="4.4" viewBox="0 0 3.2 4.4"><polygon points="3.2,0 3.2,4.4 0,2.2" fill="#a8abae"/></svg>
<svg class="a" style="left:748.6px;top:400.6px;" width="8" height="8" viewBox="0 0 8 8"><rect x="0.5" y="2.6" width="5.8" height="4.8" fill="none" stroke="#a8abae" stroke-width="0.9"/><path d="M1.8,2.4V0.8h5.6v4.6H6.4" fill="none" stroke="#a8abae" stroke-width="0.9"/><rect x="1.6" y="0.5" width="6" height="1.2" fill="#a8abae"/></svg>
<div class="a" style="left:554.4px;top:418px;width:213.6px;height:0.8px;background:#e1e4e8;"></div>
<span class="t" style="left:568px;top:427px;font-size:9.6px;line-height:9.6px;color:#6c6f72;-webkit-text-stroke:0.2px;transform:scaleX(0.935);">Slide Layers</span>
<svg class="a" style="left:738.045px;top:429.252px;" width="3.91" height="2.295" viewBox="0 0 3.91 2.295"><polygon points="0,0 3.91,0 1.95,2.29" fill="#a8abae"/></svg>
<svg class="a" style="left:748.6px;top:426.2px;" width="8" height="8" viewBox="0 0 8 8"><rect x="0.5" y="2.6" width="5.8" height="4.8" fill="none" stroke="#a8abae" stroke-width="0.9"/><path d="M1.8,2.4V0.8h5.6v4.6H6.4" fill="none" stroke="#a8abae" stroke-width="0.9"/><rect x="1.6" y="0.5" width="6" height="1.2" fill="#a8abae"/></svg>
<div class="a" style="left:554.4px;top:443px;width:213.6px;height:0.8px;background:#e1e4e8;"></div>
<div class="a" style="left:568px;top:509px;width:19px;height:1.2px;background:#dcdfe2;"></div>
<span class="t" style="left:594px;top:507px;font-size:7px;line-height:7px;color:#6e7174;-webkit-text-stroke:0.2px;transform:scaleX(1.094);">Instu</span>
<div class="a" style="left:557.4px;top:523px;width:209.2px;height:19.4px;background:#1f88d8;"></div>
<svg class="a" style="left:568px;top:527.3px;" width="18.4" height="10.8" viewBox="0 0 18.4 10.8"><rect width="18.4" height="10.8" fill="#2e2a29"/><rect x="0" y="0" width="18.4" height="1.6" fill="#4a6a98"/><rect x="1" y="3" width="7.4" height="1.4" fill="#a8741c"/><rect x="10" y="3" width="7.4" height="1.4" fill="#a8741c"/><rect x="1" y="5.4" width="7.4" height="1.4" fill="#a8741c"/><rect x="10" y="5.4" width="7.4" height="1.4" fill="#a8741c"/><rect x="1" y="7.8" width="7.4" height="1.4" fill="#8a5e16"/><rect x="10" y="7.8" width="7.4" height="1.4" fill="#8a5e16"/></svg>
<span class="t" style="left:594.8px;top:529px;font-size:7.2px;line-height:7.2px;color:#ffffff;-webkit-text-stroke:0.2px;transform:scaleX(1.006);">Module Objectives</span>
<span class="t" style="left:705.5px;top:530px;font-size:7px;line-height:7px;color:#eaf3fb;-webkit-text-stroke:0.2px;font-style:italic;transform:scaleX(0.978);">(Base Layer)</span>
<svg class="a" style="left:751.7px;top:530px;" width="7.2" height="4.8" viewBox="0 0 7.2 4.8"><path d="M0.2,2.4Q3.6,-1.4 7,2.4Q3.6,6.2 0.2,2.4z" fill="#ffffff"/><circle cx="3.6" cy="2.4" r="1.2" fill="#1f88d8"/></svg>
<div class="a" style="left:554.4px;top:542.6px;width:213.6px;height:31.2px;background:#f5f6f8;"></div>
<div class="a" style="left:568px;top:550.7px;width:16.4px;height:17.2px;background:#ffffff;border:0.8px solid #d4d7db;"></div>
<div class="a" style="left:586.3px;top:550.7px;width:16.4px;height:17.2px;background:#ffffff;border:0.8px solid #d4d7db;"></div>
<div class="a" style="left:604.4px;top:550.7px;width:16.4px;height:17.2px;background:#f6f7f8;border:0.8px solid #d4d7db;"></div>
<svg class="a" style="left:572.4px;top:554.4px;" width="8" height="10" viewBox="0 0 8 10"><path d="M0.6,0.6h4.4l2.4,2.4v6.4h-6.8z" fill="#fff" stroke="#55585c" stroke-width="0.9"/><path d="M5,0.6v2.4h2.4" fill="none" stroke="#55585c" stroke-width="0.8"/></svg>
<svg class="a" style="left:590.2px;top:554.2px;" width="9" height="10" viewBox="0 0 9 10"><path d="M2.6,0.6h4l1.6,1.6v5.2h-5.6z" fill="#fff" stroke="#6a6d70" stroke-width="0.8"/><path d="M0.6,2.6h4l1.6,1.6v5.2h-5.6z" fill="#fff" stroke="#55585c" stroke-width="0.8"/><path d="M1.6,6.4l1.2,1.4 2.2-2.8" stroke="#3f9a3f" stroke-width="1" fill="none"/></svg>
<svg class="a" style="left:608.6px;top:554.2px;" width="8" height="10" viewBox="0 0 8 10"><path d="M0.4,2.2h7.2M2.8,2.2V0.8h2.4v1.4M1.2,2.2l0.6,7.2h4.4l0.6-7.2" fill="none" stroke="#a3a6aa" stroke-width="0.8"/><path d="M3,4v3.6M5,4v3.6" stroke="#a3a6aa" stroke-width="0.6"/></svg>
<div class="a" style="left:626.8px;top:553.7px;width:10.8px;height:11.2px;background:#ffffff;border:0.8px solid #d0d3d7;"></div>
<span class="t" style="left:642.5px;top:557px;font-size:7.2px;line-height:7.2px;color:#74777b;-webkit-text-stroke:0.2px;transform:scaleX(1.031);">Dim</span>
<div class="a" style="left:746.8px;top:550.7px;width:16.4px;height:17.2px;background:#ffffff;border:0.8px solid #d4d7db;"></div>
<svg class="a" style="left:751.1px;top:555.4px;" width="7.8" height="7.8" viewBox="0 0 7.8 7.8"><rect x="3.1" y="-0.1" width="1.6" height="8" fill="#8a8d91" transform="rotate(0 3.9 3.9)"/><rect x="3.1" y="-0.1" width="1.6" height="8" fill="#8a8d91" transform="rotate(45 3.9 3.9)"/><rect x="3.1" y="-0.1" width="1.6" height="8" fill="#8a8d91" transform="rotate(90 3.9 3.9)"/><rect x="3.1" y="-0.1" width="1.6" height="8" fill="#8a8d91" transform="rotate(135 3.9 3.9)"/><circle cx="3.9" cy="3.9" r="2.8" fill="#8a8d91"/><circle cx="3.9" cy="3.9" r="1.3" fill="#fff"/></svg>
<div class="a" style="left:255.6px;top:198.4px;width:258.6px;height:219.6px;background:#f0f2f4;box-shadow:0 1px 7px rgba(0,0,0,0.38),0 0 1.5px rgba(0,0,0,0.3);"></div>
<div class="a" style="left:255.6px;top:198.4px;width:258.6px;height:26.6px;background:#dee4ea;"></div>
<span class="t" style="left:268.3px;top:209px;font-size:10px;line-height:10px;color:#6e757c;-webkit-text-stroke:0.2px;transform:scaleX(0.939);">Trigger Wizard</span>
<svg class="a" style="left:492.7px;top:209px;" width="5.8" height="5.8" viewBox="0 0 5.8 5.8"><path d="M0.4,0.4L5.4,5.4M5.4,0.4L0.4,5.4" stroke="#c3cbd2" stroke-width="0.9"/></svg>
<div class="a" style="left:319px;top:235.3px;width:182.7px;height:46.5px;background:#ffffff;border:0.6px solid #e4e7ea;"></div>
<div class="a" style="left:319px;top:283.7px;width:182.7px;height:43.5px;background:#ffffff;border:0.6px solid #e4e7ea;"></div>
<div class="a" style="left:319px;top:330px;width:182.7px;height:35.4px;background:#ffffff;border:0.6px solid #e4e7ea;"></div>
<span class="t" style="left:268.2px;top:243px;font-size:8.9px;line-height:8.9px;color:#5f656b;font-weight:bold;transform:scaleX(0.874);">Action</span>
<span class="t" style="left:268.2px;top:261px;font-size:8.7px;line-height:8.7px;color:#8f9398;-webkit-text-stroke:0.2px;transform:scaleX(0.868);">Slide</span>
<span class="t" style="left:268.2px;top:291px;font-size:8.9px;line-height:8.9px;color:#5f656b;font-weight:bold;transform:scaleX(0.916);">When</span>
<span class="t" style="left:268.2px;top:308px;font-size:8.7px;line-height:8.7px;color:#8f9398;-webkit-text-stroke:0.2px;transform:scaleX(0.931);">Object</span>
<span class="t" style="left:268.3px;top:342px;font-size:8.9px;line-height:8.9px;color:#5f656b;font-weight:bold;transform:scaleX(0.869);">Conditions</span>
<span class="t" style="left:268.3px;top:354px;font-size:8.2px;line-height:8.2px;color:#b4b8bc;-webkit-text-stroke:0.2px;transform:scaleX(0.986);">(optional)</span>
<span class="t" style="left:329.5px;top:243px;font-size:9.3px;line-height:9.3px;color:#777b80;-webkit-text-stroke:0.2px;transform:scaleX(0.869);">Print slide</span>
<div class="a" style="left:329.5px;top:252px;width:35.5px;height:0.7px;border-top:0.7px dotted #b9bcc0;"></div>
<span class="t" style="left:335.6px;top:261px;font-size:9.3px;line-height:9.3px;color:#3a8496;-webkit-text-stroke:0.2px;transform:scaleX(0.868);">this slide</span>
<div class="a" style="left:335.6px;top:269.8px;width:31.4px;height:0.7px;border-top:0.7px dotted #9dc0d0;"></div>
<span class="t" style="left:329.5px;top:291px;font-size:9.3px;line-height:9.3px;color:#777b80;-webkit-text-stroke:0.2px;transform:scaleX(0.879);">When the</span>
<div class="a" style="left:366.6px;top:288.2px;width:54.2px;height:13px;background:#fdfdfa;border:0.5px dotted #c6c8c0;"></div>
<span class="t" style="left:368.2px;top:291px;font-size:9.3px;line-height:9.3px;color:#5f802f;-webkit-text-stroke:0.2px;transform:scaleX(0.893);">timeline starts</span>
<span class="t" style="left:422.8px;top:291px;font-size:9.3px;line-height:9.3px;color:#777b80;-webkit-text-stroke:0.2px;transform:scaleX(0.860);">on</span>
<div class="a" style="left:329.5px;top:300.4px;width:169.5px;height:16.6px;background:#ffffff;border:1.1px solid #55a2da;"></div>
<div class="a" style="left:332.6px;top:304.2px;width:57.6px;height:10.4px;background:#b9d6f2;"></div>
<span class="t" style="left:333.6px;top:305px;font-size:8.8px;line-height:8.8px;color:#1f3f6e;font-weight:bold;transform:scaleX(0.899);">Timeline starts</span>
<div class="a" style="left:255.8px;top:375.2px;width:258.4px;height:0.7px;background:#dde1e5;"></div>
<div class="a" style="left:255.8px;top:375.9px;width:258.4px;height:42.1px;background:#f1f2f4;"></div>
<svg class="a" style="left:267.6px;top:391.4px;" width="12" height="12" viewBox="0 0 12 12"><circle cx="6" cy="6" r="5.2" fill="none" stroke="#6f7378" stroke-width="1.15"/><rect x="5.4" y="5" width="1.2" height="4" fill="#6a6e73"/><rect x="5.4" y="2.9" width="1.2" height="1.3" fill="#6a6e73"/></svg>
<span class="t" style="left:283px;top:395px;font-size:8px;line-height:8px;color:#777b80;-webkit-text-stroke:0.2px;transform:scaleX(0.941);">LEARN MORE</span>
<div class="a" style="left:483px;top:387.4px;width:20px;height:20px;background:#a9abaf;border-radius:50%;"></div>
<div class="a" style="left:329.5px;top:316.4px;width:169px;height:276px;background:#ffffff;box-shadow:0 1px 4px rgba(0,0,0,0.3);border-left:0.6px solid #c9ccd0;"></div>
<span class="t" style="left:339px;top:325px;font-size:8.3px;line-height:8.3px;color:#5c6065;transform:scaleX(0.970);-webkit-text-stroke:0.2px #5c6065;">Mouse Events</span>
<div class="a" style="left:328.7px;top:337px;width:159.4px;height:19px;background:#ffffff;border:2.8px solid #c00206;"></div>
<span class="t" style="left:338px;top:343px;font-size:8.3px;line-height:8.3px;color:#74787d;-webkit-text-stroke:0.2px;transform:scaleX(0.907);">User clicks</span>
<span class="t" style="left:338px;top:359px;font-size:8.3px;line-height:8.3px;color:#74787d;-webkit-text-stroke:0.2px;transform:scaleX(0.941);">User double clicks</span>
<span class="t" style="left:338px;top:375px;font-size:8.3px;line-height:8.3px;color:#74787d;-webkit-text-stroke:0.2px;transform:scaleX(0.939);">User right clicks</span>
<span class="t" style="left:338px;top:390px;font-size:8.3px;line-height:8.3px;color:#74787d;-webkit-text-stroke:0.2px;transform:scaleX(0.932);">User clicks outside</span>
<span class="t" style="left:338px;top:405px;font-size:8.3px;line-height:8.3px;color:#74787d;-webkit-text-stroke:0.2px;transform:scaleX(0.952);">Mouse hovers over</span>
<div class="a" style="left:336.8px;top:421.9px;width:148.6px;height:0.7px;background:#dfe2e5;"></div>
<span class="t" style="left:339px;top:428px;font-size:8.3px;line-height:8.3px;color:#5c6065;transform:scaleX(0.974);-webkit-text-stroke:0.2px #5c6065;">Object Events</span>
<span class="t" style="left:338px;top:446px;font-size:8.3px;line-height:8.3px;color:#74787d;-webkit-text-stroke:0.2px;transform:scaleX(0.877);">State</span>
<span class="t" style="left:338px;top:462px;font-size:8.3px;line-height:8.3px;color:#74787d;-webkit-text-stroke:0.2px;transform:scaleX(0.944);">Animation completes</span>
<span class="t" style="left:338px;top:478px;font-size:8.3px;line-height:8.3px;color:#74787d;-webkit-text-stroke:0.2px;transform:scaleX(0.938);">Object intersects</span>
<div class="a" style="left:329.5px;top:489.6px;width:158.7px;height:16.2px;background:#d9eaf8;"></div>
<span class="t" style="left:338px;top:493px;font-size:8.3px;line-height:8.3px;color:#74787d;-webkit-text-stroke:0.2px;transform:scaleX(0.948);">Object intersection ends</span>
<span class="t" style="left:338px;top:509px;font-size:8.3px;line-height:8.3px;color:#74787d;-webkit-text-stroke:0.2px;transform:scaleX(0.951);">Object enters slide</span>
<span class="t" style="left:338px;top:525px;font-size:8.3px;line-height:8.3px;color:#74787d;-webkit-text-stroke:0.2px;transform:scaleX(0.933);">Object leaves slide</span>
<div class="a" style="left:336.8px;top:541px;width:148.6px;height:0.7px;background:#dfe2e5;"></div>
<span class="t" style="left:339px;top:547px;font-size:8.3px;line-height:8.3px;color:#5c6065;transform:scaleX(0.974);-webkit-text-stroke:0.2px #5c6065;">Control Events</span>
<span class="t" style="left:338px;top:565px;font-size:8.3px;line-height:8.3px;color:#74787d;-webkit-text-stroke:0.2px;transform:scaleX(0.928);">Slider moves</span>
<span class="t" style="left:338px;top:581px;font-size:8.3px;line-height:8.3px;color:#74787d;-webkit-text-stroke:0.2px;transform:scaleX(0.936);">Dial turns</span>
<div class="a" style="left:488.4px;top:316.4px;width:10px;height:275.6px;background:#e7e7e8;"></div>
<div class="a" style="left:488.4px;top:316.4px;width:10px;height:10.4px;background:#fbfbfb;"></div>
<svg class="a" style="left:490.6px;top:319.6px;" width="4.6" height="3" viewBox="0 0 4.6 3"><path d="M0.3,2.8L2.3,0.6 4.3,2.8" stroke="#55585c" stroke-width="0.8" fill="none"/></svg>
<div class="a" style="left:488.4px;top:326px;width:10px;height:179.5px;background:#606062;"></div>
<svg class="a" style="left:491.4px;top:373px;" width="8" height="12.4" viewBox="0 0 8 12.4"><path d="M0.7,0.8v9.4l2.3-2.1 1.6,3.6 1.5-0.7-1.6-3.5h3z" fill="#ffffff" stroke="#111" stroke-width="0.8" stroke-linejoin="round"/></svg>
</body></html>
